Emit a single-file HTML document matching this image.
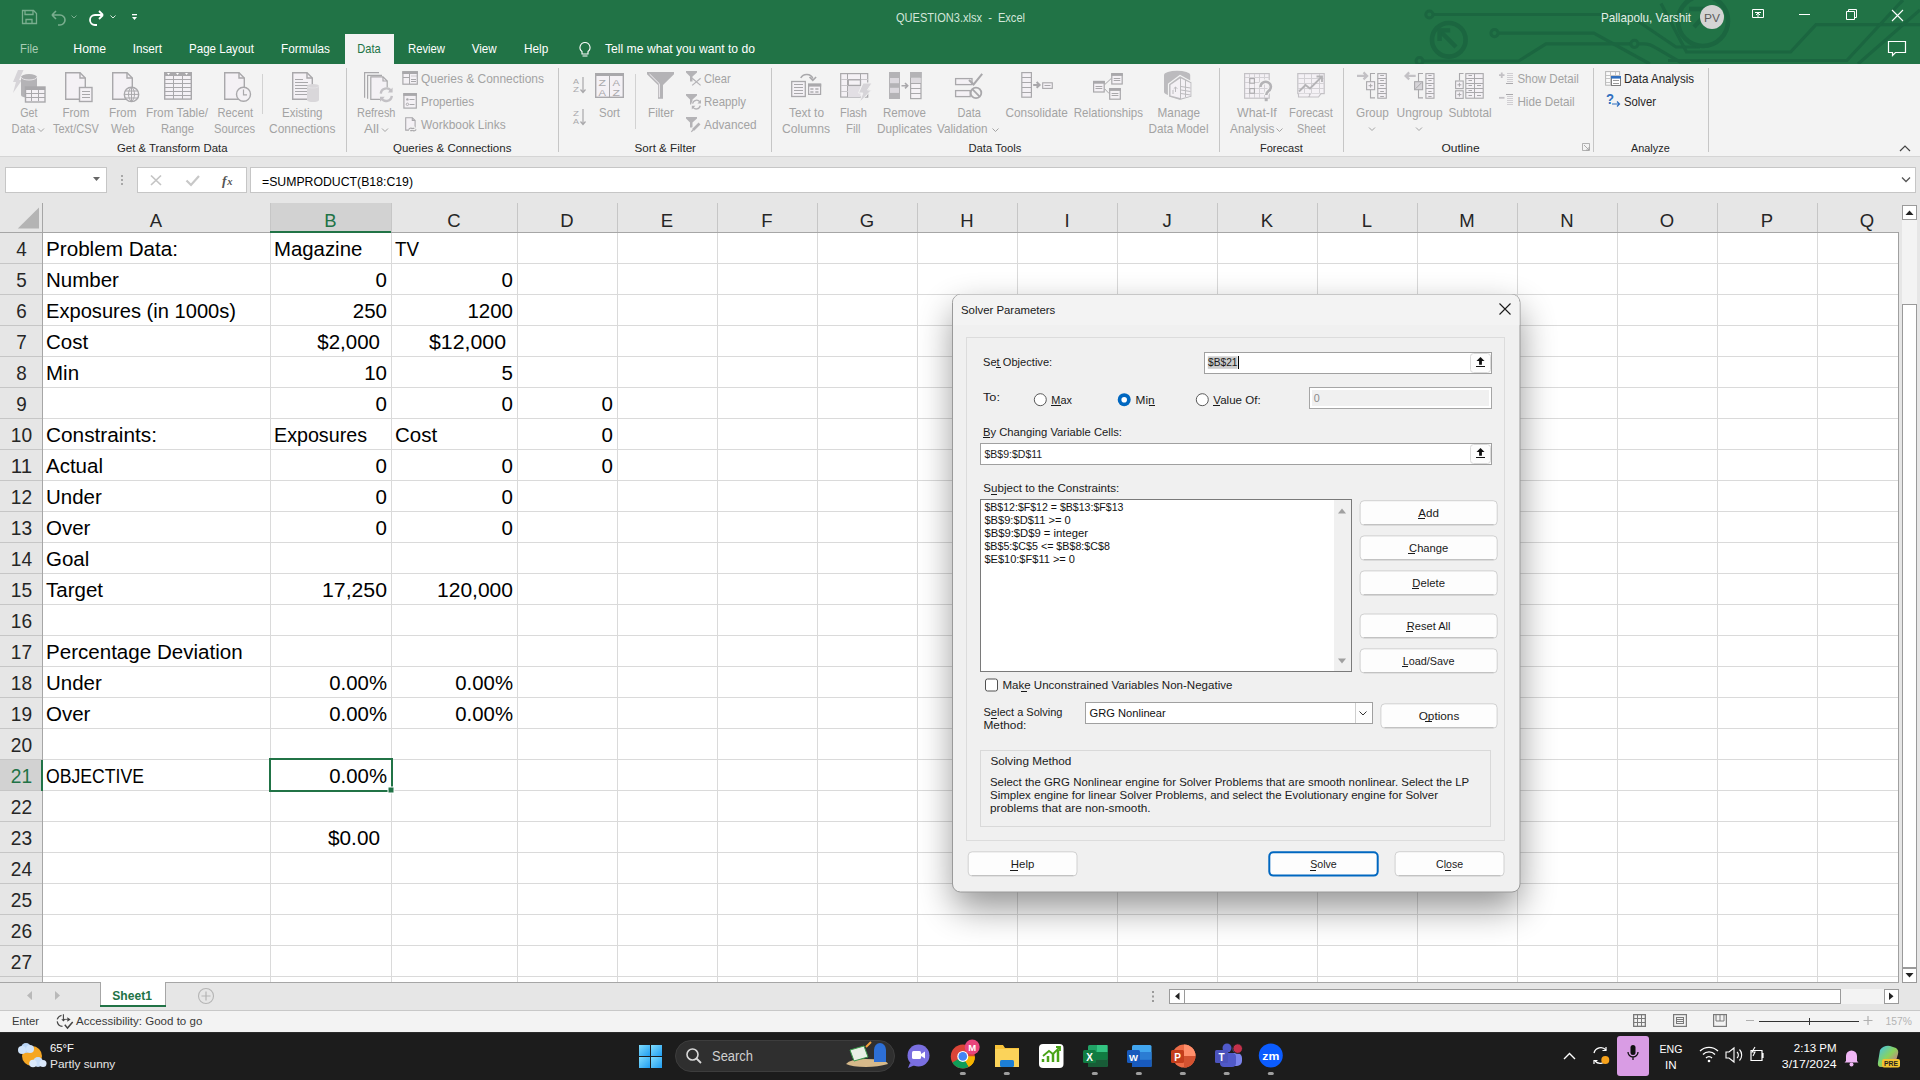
<!DOCTYPE html>
<html><head><meta charset="utf-8"><title>Excel</title>
<style>
*{margin:0;padding:0}
html,body{width:1920px;height:1080px;overflow:hidden;background:#fff}
svg{display:block;font-family:"Liberation Sans",sans-serif}
text{white-space:pre}
</style></head><body>
<svg width="1920" height="1080" viewBox="0 0 1920 1080">
<rect x="0" y="0" width="1920" height="64" fill="#217346" />
<g fill="none" stroke="#1b6640" stroke-width="3.2">
<path d="M1433 14.5 H1608 L1628 14.5 L1676 47 H1700" fill="none" />
<circle cx="1429.4" cy="14.5" r="3.6" fill="none" stroke="#1b6640" stroke-width="3" />
<circle cx="1448.8" cy="39.8" r="16.8" fill="none" stroke="#1b6640" stroke-width="4.6" />
<path d="M1456 47 L1441.5 32.5" fill="none" stroke="#1b6640" stroke-width="4.4" />
<path d="M1439.6 41 V30.4 H1450.2" fill="none" stroke="#1b6640" stroke-width="4.4" />
<path d="M1498.4 33.1 H1593.8 L1650 64" fill="none" />
<circle cx="1494.5" cy="33.1" r="3.6" fill="none" stroke="#1b6640" stroke-width="3" />
<path d="M1423 61 H1518.8 L1546 43.8 H1630.6" fill="none" />
<circle cx="1419.5" cy="61" r="3.4" fill="none" stroke="#1b6640" stroke-width="3" />
<circle cx="1634.4" cy="43.8" r="3.6" fill="none" stroke="#1b6640" stroke-width="3" />
<path d="M1638.2 43.8 H1644 Q1650 43.8 1656 48 L1680 62 H1690" fill="none" />
<circle cx="1703" cy="21" r="25" fill="none" stroke="#1b6640" stroke-width="4.6" />
<path d="M1689 9 H1711 L1694 27" fill="none" stroke="#1b6640" stroke-width="4.4" />
<path d="M1661 3.5 L1686.5 52 H1790.6 L1816 24.7 H1920" fill="none" />
<path d="M1668 60.5 H1846.8 L1900 3 L1903 0" fill="none" />
<path d="M1858 64 L1920 10" fill="none" />
</g>
<path d="M22.5 10.5 h11 l3 3 v10 h-14 z" fill="none" stroke="#7aae8f" stroke-width="1.3" />
<path d="M25 10.5 v4 h8 v-4 M26 23.5 v-4 h6 v4" fill="none" stroke="#7aae8f" stroke-width="1.3" />
<path d="M52 15 l4 -4 M52 15 l4 4 M52 15 h8 a5 5 0 0 1 0 10 h-2" fill="none" stroke="#7aae8f" stroke-width="1.6" />
<path d="M71.5 15.5 l2.5 2.5 l2.5 -2.5" fill="none" stroke="#7aae8f" stroke-width="1" />
<path d="M103 15 l-4 -4 M103 15 l-4 4 M103 15 h-8 a5 5 0 0 0 0 10 h2" fill="none" stroke="#fff" stroke-width="1.8" />
<path d="M110.5 15.5 l2.5 2.5 l2.5 -2.5" fill="none" stroke="#d8e8de" stroke-width="1" />
<rect x="132" y="14" width="5" height="1.3" fill="#fff" />
<path d="M132 17 h5 l-2.5 3 z" fill="#fff" />
<text x="896" y="22" font-size="12.6" fill="#d3e6da" textLength="129" lengthAdjust="spacingAndGlyphs" >QUESTION3.xlsx  -  Excel</text>
<text x="1601" y="22" font-size="12.6" fill="#e3efe7" textLength="90" lengthAdjust="spacingAndGlyphs" >Pallapolu, Varshit</text>
<circle cx="1712" cy="17" r="12" fill="#d4d4d4" />
<text x="1712" y="21.5" font-size="11" fill="#5b5b5b" text-anchor="middle" textLength="16" lengthAdjust="spacingAndGlyphs" >PV</text>
<path d="M1752.5 9.5 h11 v8 h-11 z" fill="none" stroke="#ffffff" stroke-width="1" />
<path d="M1755 12.5 h6 M1758 17.5 v-4 M1756 15 l2 -2 l2 2" fill="none" stroke="#ffffff" stroke-width="1" />
<rect x="1799" y="14" width="11" height="1" fill="#ffffff" />
<path d="M1846.5 11.5 h8 v8 h-8 z M1848.5 11.5 v-2 h8 v8 h-2" fill="none" stroke="#ffffff" stroke-width="1" />
<path d="M1892 10 l11 11 M1903 10 l-11 11" fill="none" stroke="#ffffff" stroke-width="1.1" />
<path d="M1888.5 41.5 h17 v11 h-10 l-3 3 v-3 h-4 z" fill="none" stroke="#ffffff" stroke-width="1.2" />
<rect x="345" y="34" width="49" height="30" fill="#f3f3f3" />
<text x="20" y="53" font-size="12.2" fill="#a8cdb4" textLength="18.3" lengthAdjust="spacingAndGlyphs" >File</text>
<text x="73.3" y="53" font-size="12.2" fill="#fff" textLength="32.7" lengthAdjust="spacingAndGlyphs" >Home</text>
<text x="132.7" y="53" font-size="12.2" fill="#fff" textLength="29.3" lengthAdjust="spacingAndGlyphs" >Insert</text>
<text x="189" y="53" font-size="12.2" fill="#fff" textLength="65" lengthAdjust="spacingAndGlyphs" >Page Layout</text>
<text x="281" y="53" font-size="12.2" fill="#fff" textLength="49" lengthAdjust="spacingAndGlyphs" >Formulas</text>
<text x="357.3" y="53" font-size="12.2" fill="#217346" textLength="23.4" lengthAdjust="spacingAndGlyphs" >Data</text>
<text x="408" y="53" font-size="12.2" fill="#fff" textLength="37" lengthAdjust="spacingAndGlyphs" >Review</text>
<text x="471.7" y="53" font-size="12.2" fill="#fff" textLength="25" lengthAdjust="spacingAndGlyphs" >View</text>
<text x="524" y="53" font-size="12.2" fill="#fff" textLength="24.3" lengthAdjust="spacingAndGlyphs" >Help</text>
<text x="605" y="53" font-size="12.2" fill="#fff" textLength="150" lengthAdjust="spacingAndGlyphs" >Tell me what you want to do</text>
<path d="M585 42.5 a5 5 0 0 1 3 9 v2.5 h-6 v-2.5 a5 5 0 0 1 3 -9 z" fill="none" stroke="#fff" stroke-width="1.1" />
<rect x="582.5" y="55.5" width="5" height="1" fill="#fff" />
<rect x="0" y="64" width="1920" height="92" fill="#f3f3f3" />
<rect x="0" y="156" width="1920" height="1" fill="#d5d5d5"/>
<rect x="0" y="157" width="1920" height="1" fill="#e1e1e1" />
<rect x="346" y="68" width="1" height="84" fill="#c6c6c6"/>
<rect x="558" y="68" width="1" height="84" fill="#c6c6c6"/>
<rect x="771" y="68" width="1" height="84" fill="#c6c6c6"/>
<rect x="1219" y="68" width="1" height="84" fill="#c6c6c6"/>
<rect x="1343" y="68" width="1" height="84" fill="#c6c6c6"/>
<rect x="1593" y="68" width="1" height="84" fill="#c6c6c6"/>
<rect x="1708" y="68" width="1" height="84" fill="#c6c6c6"/>
<rect x="262" y="74" width="1" height="40" fill="#d2d2d2"/>
<rect x="635" y="74" width="1" height="55" fill="#d2d2d2"/>
<path d="M18 70 H23.5 L19 80 H22 L13 93 L16 82 H13 Z" fill="#d6d4d8" />
<path d="M21 77 a8 3 0 0 1 16 0 V95 a8 3 0 0 1 -16 0 Z" fill="#b4b3b6" />
<path d="M21 77 a8 3 0 0 0 16 0" fill="none" stroke="#e9e7ea" stroke-width="1" />
<rect x="25.5" y="87" width="19.5" height="15" fill="#f4f1f5" stroke="#a9a8ab" stroke-width="1.4" />
<rect x="25.5" y="87" width="19.5" height="3" fill="#a9a8ab" />
<rect x="31" y="89" width="1" height="12" fill="#a9a8ab"/>
<rect x="38" y="89" width="1" height="12" fill="#a9a8ab"/>
<rect x="26" y="93" width="19" height="1" fill="#a9a8ab"/>
<rect x="26" y="97" width="19" height="1" fill="#a9a8ab"/>
<text x="20.3" y="117" font-size="12.2" fill="#a3a3a3" textLength="17.2" lengthAdjust="spacingAndGlyphs" >Get</text>
<text x="11.6" y="133" font-size="12.2" fill="#a3a3a3" textLength="23.5" lengthAdjust="spacingAndGlyphs" >Data</text>
<path d="M38 128.5 l3 3 l3 -3" fill="none" stroke="#a3a3a3" stroke-width="1" />
<path d="M65.7 72.7 H80 L85.3 78 V99.3 H65.7 Z" fill="#f4f1f5" stroke="#a9a8ab" stroke-width="1.4" />
<path d="M80 72.7 V78 H85.3" fill="none" stroke="#a9a8ab" stroke-width="1.4" />
<rect x="79.5" y="87.5" width="12.5" height="14" fill="#f4f1f5" stroke="#a9a8ab" stroke-width="1.4" />
<rect x="82" y="91" width="8" height="1" fill="#a9a8ab"/>
<rect x="82" y="94" width="8" height="1" fill="#a9a8ab"/>
<rect x="82" y="97" width="8" height="1" fill="#a9a8ab"/>
<text x="62.4" y="117" font-size="12.2" fill="#a3a3a3" textLength="27" lengthAdjust="spacingAndGlyphs" >From</text>
<text x="53" y="133" font-size="12.2" fill="#a3a3a3" textLength="45.8" lengthAdjust="spacingAndGlyphs" >Text/CSV</text>
<path d="M112.7 72.7 H127 L132.3 78 V99.3 H112.7 Z" fill="#f4f1f5" stroke="#a9a8ab" stroke-width="1.4" />
<path d="M127 72.7 V78 H132.3" fill="none" stroke="#a9a8ab" stroke-width="1.4" />
<circle cx="131.5" cy="94.4" r="7.2" fill="#f4f1f5" stroke="#a9a8ab" stroke-width="1.4" />
<path d="M124.5 94.4 H138.5 M125.5 91 H137.5 M125.5 98 H137.5 M131.5 87.2 V101.6 M131.5 87.2 c-4 3 -4 11 0 14.4 M131.5 87.2 c4 3 4 11 0 14.4" fill="none" stroke="#a9a8ab" stroke-width="1" />
<text x="109" y="117" font-size="12.2" fill="#a3a3a3" textLength="27.5" lengthAdjust="spacingAndGlyphs" >From</text>
<text x="111" y="133" font-size="12.2" fill="#a3a3a3" textLength="23.6" lengthAdjust="spacingAndGlyphs" >Web</text>
<rect x="164.7" y="72.7" width="26.6" height="26.4" fill="#f4f1f5" stroke="#a9a8ab" stroke-width="1.4" />
<rect x="164" y="72" width="28" height="4" fill="#a9a8ab" />
<rect x="173" y="76" width="1" height="23" fill="#a9a8ab"/>
<rect x="182" y="76" width="1" height="23" fill="#a9a8ab"/>
<rect x="165" y="79" width="26" height="1" fill="#a9a8ab"/>
<rect x="165" y="83" width="26" height="1" fill="#a9a8ab"/>
<rect x="165" y="87" width="26" height="1" fill="#a9a8ab"/>
<rect x="165" y="91" width="26" height="1" fill="#a9a8ab"/>
<rect x="165" y="95" width="26" height="1" fill="#a9a8ab"/>
<path d="M167.0 73 h3 l-1.5 2 z" fill="#fff" />
<path d="M176.0 73 h3 l-1.5 2 z" fill="#fff" />
<path d="M185.0 73 h3 l-1.5 2 z" fill="#fff" />
<text x="146" y="117" font-size="12.2" fill="#a3a3a3" textLength="62" lengthAdjust="spacingAndGlyphs" >From Table/</text>
<text x="161" y="133" font-size="12.2" fill="#a3a3a3" textLength="33" lengthAdjust="spacingAndGlyphs" >Range</text>
<path d="M224.7 72.7 H239 L244.3 78 V99.3 H224.7 Z" fill="#f4f1f5" stroke="#a9a8ab" stroke-width="1.4" />
<path d="M239 72.7 V78 H244.3" fill="none" stroke="#a9a8ab" stroke-width="1.4" />
<circle cx="243.5" cy="94.3" r="7" fill="#f4f1f5" stroke="#a9a8ab" stroke-width="1.4" />
<path d="M243.5 89.5 V94.8 H247" fill="none" stroke="#a9a8ab" stroke-width="1.2" />
<text x="217.5" y="117" font-size="12.2" fill="#a3a3a3" textLength="35.5" lengthAdjust="spacingAndGlyphs" >Recent</text>
<text x="214" y="133" font-size="12.2" fill="#a3a3a3" textLength="41" lengthAdjust="spacingAndGlyphs" >Sources</text>
<path d="M292.7 72.7 H307 L312.3 78 V99.3 H292.7 Z" fill="#f4f1f5" stroke="#a9a8ab" stroke-width="1.4" />
<path d="M307 72.7 V78 H312.3" fill="none" stroke="#a9a8ab" stroke-width="1.4" />
<rect x="295" y="79" width="8" height="1" fill="#a9a8ab"/>
<rect x="295" y="82" width="13" height="1" fill="#a9a8ab"/>
<rect x="295" y="85" width="13" height="1" fill="#a9a8ab"/>
<rect x="295" y="88" width="13" height="1" fill="#a9a8ab"/>
<rect x="295" y="91" width="13" height="1" fill="#a9a8ab"/>
<rect x="295" y="94" width="13" height="1" fill="#a9a8ab"/>
<path d="M307 86 a6 2 0 0 1 12 0 V100 a6 2 0 0 1 -12 0 Z" fill="#d9d7da" />
<path d="M307 86 a6 2 0 0 0 12 0" fill="none" stroke="#e6e4e7" stroke-width="0.8" />
<text x="282" y="117" font-size="12.2" fill="#a3a3a3" textLength="40.5" lengthAdjust="spacingAndGlyphs" >Existing</text>
<text x="269" y="133" font-size="12.2" fill="#a3a3a3" textLength="66.5" lengthAdjust="spacingAndGlyphs" >Connections</text>
<text x="117" y="152" font-size="11.6" fill="#262626" textLength="110.5" lengthAdjust="spacingAndGlyphs" >Get &amp; Transform Data</text>
<path d="M364.6 97.7 V72.6 H379" fill="none" stroke="#a9a8ab" stroke-width="1.2" />
<path d="M367.6 98.8 V75.3 H382" fill="none" stroke="#a9a8ab" stroke-width="1.2" />
<path d="M370.8 76.9 H383 L387.2 81 V99.4 H370.8 Z" fill="#f4f1f5" stroke="#a9a8ab" stroke-width="1.2" />
<path d="M383 76.9 V81 H387.2" fill="none" stroke="#a9a8ab" stroke-width="1.2" />
<circle cx="386.3" cy="94.7" r="7.5" fill="#f3f3f3" />
<path d="M380.8 93.6 a5.6 5.6 0 0 1 10.4 -2.4 M391.8 95.8 a5.6 5.6 0 0 1 -10.4 2.4" fill="none" stroke="#c3c1c5" stroke-width="2.4" />
<path d="M392.6 87.6 V92.6 H387.8 Z M380 101.8 V96.8 H384.8 Z" fill="#c3c1c5" />
<text x="357" y="117" font-size="12.2" fill="#a3a3a3" textLength="38.5" lengthAdjust="spacingAndGlyphs" >Refresh</text>
<text x="364" y="133" font-size="12.2" fill="#a3a3a3" textLength="15" lengthAdjust="spacingAndGlyphs" >All</text>
<path d="M382 128.5 l3 3 l3 -3" fill="none" stroke="#a3a3a3" stroke-width="1" />
<rect x="402.9" y="71.8" width="14.4" height="12.4" fill="#f4f1f5" stroke="#a9a8ab" stroke-width="1.2" />
<rect x="402.3" y="71.2" width="15.6" height="2.8" fill="#a9a8ab" />
<rect x="409" y="74" width="1" height="10" fill="#a9a8ab"/>
<rect x="403" y="77" width="7" height="1" fill="#a9a8ab"/>
<rect x="411.5" y="75.5" width="1" height="1" fill="#a9a8ab" />
<rect x="413.5" y="75.5" width="1" height="1" fill="#a9a8ab" />
<rect x="415.5" y="75.5" width="1" height="1" fill="#a9a8ab" />
<rect x="411" y="79" width="5" height="1" fill="#a9a8ab"/>
<rect x="411" y="81" width="5" height="1" fill="#a9a8ab"/>
<text x="421" y="83" font-size="12.2" fill="#a3a3a3" textLength="123" lengthAdjust="spacingAndGlyphs" >Queries &amp; Connections</text>
<rect x="403.9" y="93.7" width="12.4" height="14.4" fill="#f4f1f5" stroke="#a9a8ab" stroke-width="1.2" />
<rect x="403.3" y="93.1" width="13.6" height="2.8" fill="#a9a8ab" />
<circle cx="407.4" cy="99.4" r="1.2" fill="#a9a8ab" />
<circle cx="407.4" cy="104.3" r="1.2" fill="#f4f1f5" stroke="#a9a8ab" stroke-width="0.9" />
<rect x="409.5" y="99" width="5.0" height="1" fill="#a9a8ab"/>
<rect x="409.5" y="104" width="5.0" height="1" fill="#a9a8ab"/>
<text x="421" y="106" font-size="12.2" fill="#a3a3a3" textLength="53" lengthAdjust="spacingAndGlyphs" >Properties</text>
<path d="M405.7 117.7 H412.3 L415.1 120.5 V130.10000000000002 H405.7 Z" fill="#f4f1f5" stroke="#a9a8ab" stroke-width="1.1" />
<path d="M412.3 117.7 V120.5 H415.1" fill="none" stroke="#a9a8ab" stroke-width="1.1" />
<circle cx="412.4" cy="129.5" r="3.6" fill="#f3f3f3" />
<path d="M408.8 129.8 a2 1.6 0 0 1 3.6 -1 M416 129.2 a2 1.6 0 0 1 -3.6 1 M410.2 130.6 h2 M412.4 128.4 h2" fill="none" stroke="#a9a8ab" stroke-width="1.1" />
<text x="421" y="129" font-size="12.2" fill="#a3a3a3" textLength="84.7" lengthAdjust="spacingAndGlyphs" >Workbook Links</text>
<text x="393" y="152" font-size="11.6" fill="#262626" textLength="118.4" lengthAdjust="spacingAndGlyphs" >Queries &amp; Connections</text>
<text x="573" y="84" font-size="7.5" fill="#a9a8ab" textLength="6" lengthAdjust="spacingAndGlyphs" >A</text>
<text x="573" y="92" font-size="7.5" fill="#a9a8ab" textLength="6" lengthAdjust="spacingAndGlyphs" >Z</text>
<path d="M583 77 V92 M580.5 89.5 l2.5 3 l2.5 -3" fill="none" stroke="#a9a8ab" stroke-width="1.2" />
<text x="573" y="116" font-size="7.5" fill="#a9a8ab" textLength="6" lengthAdjust="spacingAndGlyphs" >Z</text>
<text x="573" y="124" font-size="7.5" fill="#a9a8ab" textLength="6" lengthAdjust="spacingAndGlyphs" >A</text>
<path d="M583 109 V124 M580.5 121.5 l2.5 3 l2.5 -3" fill="none" stroke="#a9a8ab" stroke-width="1.2" />
<rect x="595.7" y="73.7" width="27.6" height="23.6" fill="#f4f1f5" stroke="#a9a8ab" stroke-width="1.4" />
<rect x="595" y="73" width="29" height="3" fill="#a9a8ab" />
<rect x="609" y="76" width="1" height="21" fill="#a9a8ab"/>
<text x="598.5" y="86" font-size="9.5" fill="#a9a8ab" textLength="7.5" lengthAdjust="spacingAndGlyphs" >Z</text>
<text x="598.5" y="96" font-size="9.5" fill="#a9a8ab" textLength="7.5" lengthAdjust="spacingAndGlyphs" >A</text>
<text x="612.5" y="86" font-size="9.5" fill="#a9a8ab" textLength="7.5" lengthAdjust="spacingAndGlyphs" >A</text>
<text x="612.5" y="96" font-size="9.5" fill="#a9a8ab" textLength="7.5" lengthAdjust="spacingAndGlyphs" >Z</text>
<text x="599" y="117" font-size="12.2" fill="#a3a3a3" textLength="21" lengthAdjust="spacingAndGlyphs" >Sort</text>
<path d="M647 72 H674 V74.3 L663 85 V98.7 H658 V85 L647 74.3 Z" fill="#b4b3b6" />
<path d="M649.5 74 L659.3 83.7 V97.3" fill="none" stroke="#f4f1f5" stroke-width="1" />
<text x="648" y="117" font-size="12.2" fill="#a3a3a3" textLength="26" lengthAdjust="spacingAndGlyphs" >Filter</text>
<path d="M686 71 H697 V72.5 L692.5 76.4 V81.5 H690 V76.4 L686 72.5 Z" fill="#b4b3b6" />
<path d="M692.2 78.3 L700.6 85.4 M692.2 85.4 L700.6 78.3" fill="none" stroke="#b4b3b6" stroke-width="1.2" />
<text x="704" y="83" font-size="12.2" fill="#a3a3a3" textLength="26.7" lengthAdjust="spacingAndGlyphs" >Clear</text>
<path d="M686 94 H697 V95.5 L692.5 99.4 V104.5 H690 V99.4 L686 95.5 Z" fill="#b4b3b6" />
<circle cx="696.4" cy="104.6" r="5.2" fill="#f3f3f3" />
<path d="M692.6 103.6 a4 4 0 0 1 7.4 -1.4 M700.2 105.6 a4 4 0 0 1 -7.4 1.4" fill="none" stroke="#b4b3b6" stroke-width="1.3" />
<path d="M701 99.8 V103.4 H697.4 Z M691.8 109.4 V105.8 H695.4 Z" fill="#b4b3b6" />
<text x="704" y="106" font-size="12.2" fill="#a3a3a3" textLength="42" lengthAdjust="spacingAndGlyphs" >Reapply</text>
<path d="M686 117 H697 V118.5 L692.5 122.4 V127.5 H690 V122.4 L686 118.5 Z" fill="#b4b3b6" />
<path d="M699.5 123.5 L692.5 130.5" fill="none" stroke="#f3f3f3" stroke-width="4.5" />
<path d="M699.5 123.5 L693 130" fill="none" stroke="#b4b3b6" stroke-width="2.6" />
<path d="M693 130 L691.3 131.8" fill="none" stroke="#b4b3b6" stroke-width="1.2" />
<text x="704" y="129" font-size="12.2" fill="#a3a3a3" textLength="52.6" lengthAdjust="spacingAndGlyphs" >Advanced</text>
<text x="634.5" y="152" font-size="11.6" fill="#262626" textLength="61.5" lengthAdjust="spacingAndGlyphs" >Sort &amp; Filter</text>
<rect x="791.7" y="81.5" width="13.6" height="15" fill="#f4f1f5" stroke="#a9a8ab" stroke-width="1.3" />
<rect x="794" y="84" width="9" height="1" fill="#a9a8ab"/>
<rect x="794" y="87" width="9" height="1" fill="#a9a8ab"/>
<rect x="794" y="90" width="9" height="1" fill="#a9a8ab"/>
<rect x="794" y="93" width="9" height="1" fill="#a9a8ab"/>
<rect x="808.6" y="84.2" width="12" height="10.2" fill="#f4f1f5" stroke="#a9a8ab" stroke-width="1.2" />
<rect x="808" y="83.6" width="13.2" height="3" fill="#a9a8ab" />
<rect x="810.3" y="88.3" width="3.2" height="1.4" fill="#a9a8ab" />
<rect x="815.3" y="88.3" width="3.2" height="1.4" fill="#a9a8ab" />
<rect x="810.3" y="91.3" width="3.2" height="1.4" fill="#a9a8ab" />
<rect x="815.3" y="91.3" width="3.2" height="1.4" fill="#a9a8ab" />
<path d="M800.8 78 a6.5 6 0 0 1 12 0.5" fill="none" stroke="#a9a8ab" stroke-width="1.6" />
<path d="M809.5 77 l3.3 3.3 l3.3 -3.3" fill="none" stroke="#a9a8ab" stroke-width="1.6" />
<text x="789" y="117" font-size="12.2" fill="#a3a3a3" textLength="35" lengthAdjust="spacingAndGlyphs" >Text to</text>
<text x="782" y="133" font-size="12.2" fill="#a3a3a3" textLength="48" lengthAdjust="spacingAndGlyphs" >Columns</text>
<rect x="840.7" y="73.6" width="27" height="23.5" fill="#f4f1f5" stroke="#a9a8ab" stroke-width="1.2" />
<rect x="848" y="85.6" width="12.5" height="11.5" fill="#e2dfe4" />
<rect x="847" y="73.6" width="1" height="23.400000000000006" fill="#a9a8ab"/>
<rect x="860" y="73.6" width="1" height="6.400000000000006" fill="#a9a8ab"/>
<rect x="841" y="79" width="27" height="1" fill="#c9c7cb"/>
<rect x="841" y="85" width="7" height="1" fill="#c9c7cb"/>
<rect x="841" y="91" width="7" height="1" fill="#c9c7cb"/>
<rect x="848.3" y="79.8" width="12.2" height="5.6" fill="#f4f1f5" stroke="#a9a8ab" stroke-width="1.3" />
<path d="M863 83 H872 L867.5 90 H871.5 L859.5 102.5 L862.8 93 H858.5 Z" fill="#d6d4d8" stroke="#f3f3f3" stroke-width="1" />
<text x="840" y="117" font-size="12.2" fill="#a3a3a3" textLength="27" lengthAdjust="spacingAndGlyphs" >Flash</text>
<text x="846" y="133" font-size="12.2" fill="#a3a3a3" textLength="14.6" lengthAdjust="spacingAndGlyphs" >Fill</text>
<rect x="889" y="72" width="11" height="27" fill="#b4b3b6" />
<rect x="890" y="78" width="9" height="5.2" fill="#dcd9de" />
<rect x="890" y="87.8" width="9" height="5.1" fill="#dcd9de" />
<rect x="910.6" y="72.6" width="10.4" height="26" fill="#f4f1f5" stroke="#a9a8ab" stroke-width="1.2" />
<rect x="910" y="72" width="11.6" height="5.8" fill="#b4b3b6" />
<rect x="911" y="78" width="9.6" height="5.2" fill="#dcd9de" />
<rect x="911" y="83" width="10" height="1" fill="#a9a8ab"/>
<rect x="911" y="88" width="10" height="1" fill="#a9a8ab"/>
<rect x="911" y="93" width="10" height="1" fill="#a9a8ab"/>
<path d="M901.5 85.7 H907.5 M905 83 l2.7 2.7 l-2.7 2.7" fill="none" stroke="#a9a8ab" stroke-width="1.6" />
<text x="883" y="117" font-size="12.2" fill="#a3a3a3" textLength="43" lengthAdjust="spacingAndGlyphs" >Remove</text>
<text x="877" y="133" font-size="12.2" fill="#a3a3a3" textLength="55" lengthAdjust="spacingAndGlyphs" >Duplicates</text>
<rect x="955.6" y="78.6" width="16.4" height="6" fill="#f4f1f5" stroke="#a9a8ab" stroke-width="1.3" />
<rect x="955.6" y="90.6" width="14.6" height="6" fill="#f4f1f5" stroke="#a9a8ab" stroke-width="1.3" />
<path d="M969 80 l4.6 4.5 l8.6 -10.7" fill="none" stroke="#a9a8ab" stroke-width="2" />
<circle cx="976" cy="92.9" r="5.3" fill="#f3f3f3" stroke="#a9a8ab" stroke-width="1.8" />
<path d="M972.3 89.2 l7.4 7.4" fill="none" stroke="#a9a8ab" stroke-width="1.8" />
<text x="957.6" y="117" font-size="12.2" fill="#a3a3a3" textLength="23.2" lengthAdjust="spacingAndGlyphs" >Data</text>
<text x="937" y="133" font-size="12.2" fill="#a3a3a3" textLength="50.5" lengthAdjust="spacingAndGlyphs" >Validation</text>
<path d="M992.5 128.5 l3 3 l3 -3" fill="none" stroke="#a3a3a3" stroke-width="1" />
<rect x="1021.8" y="72.6" width="9.6" height="24.6" fill="#f4f1f5" stroke="#a9a8ab" stroke-width="1.2" />
<rect x="1022" y="77" width="9" height="1" fill="#a9a8ab"/>
<rect x="1022" y="82" width="9" height="1" fill="#a9a8ab"/>
<rect x="1022" y="87" width="9" height="1" fill="#a9a8ab"/>
<rect x="1022" y="92" width="9" height="1" fill="#a9a8ab"/>
<path d="M1033.2 84.9 H1039 M1036.6 82 l3 2.9 l-3 2.9" fill="none" stroke="#a9a8ab" stroke-width="2" />
<rect x="1042.7" y="82.8" width="9.6" height="5.6" fill="#f4f1f5" stroke="#a9a8ab" stroke-width="1.1" />
<rect x="1044.5" y="85" width="6.0" height="1" fill="#a9a8ab"/>
<text x="1005.5" y="117" font-size="12.2" fill="#a3a3a3" textLength="62.3" lengthAdjust="spacingAndGlyphs" >Consolidate</text>
<rect x="1093.6" y="81.5" width="10.599999999999955" height="10.49999999999999" fill="#f4f1f5" stroke="#a9a8ab" stroke-width="1.2" />
<rect x="1093" y="80.9" width="11.799999999999955" height="2.8" fill="#a9a8ab" />
<rect x="1095.5" y="86" width="6.7999999999999545" height="1" fill="#a9a8ab"/>
<rect x="1095.5" y="88" width="6.7999999999999545" height="1" fill="#a9a8ab"/>
<rect x="1111.8" y="73.69999999999999" width="10.39999999999991" height="10.3" fill="#f4f1f5" stroke="#a9a8ab" stroke-width="1.2" />
<rect x="1111.2" y="73.1" width="11.599999999999909" height="2.8" fill="#a9a8ab" />
<rect x="1113.7" y="78" width="6.599999999999909" height="1" fill="#a9a8ab"/>
<rect x="1113.7" y="80" width="6.599999999999909" height="1" fill="#a9a8ab"/>
<rect x="1109.6999999999998" y="88.69999999999999" width="10.600000000000183" height="10.500000000000004" fill="#f4f1f5" stroke="#a9a8ab" stroke-width="1.2" />
<rect x="1109.1" y="88.1" width="11.800000000000182" height="2.8" fill="#a9a8ab" />
<rect x="1111.6" y="93" width="6.800000000000182" height="1" fill="#a9a8ab"/>
<rect x="1111.6" y="95" width="6.800000000000182" height="1" fill="#a9a8ab"/>
<path d="M1104.8 84.5 L1111.2 78.5 M1104.8 89 L1109.1 93.5" fill="none" stroke="#a9a8ab" stroke-width="1" />
<text x="1073.8" y="117" font-size="12.2" fill="#a3a3a3" textLength="69.2" lengthAdjust="spacingAndGlyphs" >Relationships</text>
<path d="M1164 75 a13 4.2 0 0 1 26.2 0 V92 a13 4.2 0 0 1 -26.2 0 Z" fill="#bcbbbe" />
<path d="M1168.5 84 L1180 75.5 L1192 82 V97 L1180 100.5 L1168.5 97 Z" fill="#bcbbbe" stroke="#f3f3f3" stroke-width="1.2" />
<path d="M1170.5 85 L1180 78.5 V98 L1170.5 95.5 Z" fill="#f4f1f5" />
<path d="M1181 78.5 L1190.5 83 V96 L1181 98.5 Z" fill="#f4f1f5" />
<path d="M1181 86.5 L1190.5 88.0" fill="none" stroke="#bcbbbe" stroke-width="1" />
<path d="M1181 90 L1190.5 91.5" fill="none" stroke="#bcbbbe" stroke-width="1" />
<path d="M1181 93.5 L1190.5 95.0" fill="none" stroke="#bcbbbe" stroke-width="1" />
<rect x="1185" y="80" width="1" height="17" fill="#bcbbbe"/>
<path d="M1175.5 92 v-5 l-1.8 1.8 M1175.5 87 l1.8 1.8 M1173 90 l0 4" fill="none" stroke="#bcbbbe" stroke-width="1" />
<text x="1157.6" y="117" font-size="12.2" fill="#a3a3a3" textLength="42.4" lengthAdjust="spacingAndGlyphs" >Manage</text>
<text x="1148.5" y="133" font-size="12.2" fill="#a3a3a3" textLength="60" lengthAdjust="spacingAndGlyphs" >Data Model</text>
<text x="968.4" y="152" font-size="11.6" fill="#262626" textLength="53" lengthAdjust="spacingAndGlyphs" >Data Tools</text>
<rect x="1244.6" y="73.6" width="24.6" height="24.6" fill="#f4f1f5" stroke="#c3c1c5" stroke-width="1.2" />
<rect x="1249" y="74" width="1" height="24" fill="#d3d1d5"/>
<rect x="1254" y="74" width="1" height="24" fill="#d3d1d5"/>
<rect x="1259" y="74" width="1" height="24" fill="#d3d1d5"/>
<rect x="1264" y="74" width="1" height="24" fill="#d3d1d5"/>
<rect x="1245" y="77" width="24" height="1" fill="#d3d1d5"/>
<rect x="1245" y="82" width="24" height="1" fill="#d3d1d5"/>
<rect x="1245" y="88" width="24" height="1" fill="#d3d1d5"/>
<rect x="1245" y="93" width="24" height="1" fill="#d3d1d5"/>
<rect x="1249.8" y="78.6" width="4.6" height="4.6" fill="#f4f1f5" stroke="#a9a8ab" stroke-width="1.1" />
<rect x="1249.8" y="88.6" width="4.6" height="4.6" fill="#f4f1f5" stroke="#a9a8ab" stroke-width="1.1" />
<path d="M1260.5 87 a5.2 5 0 1 1 8 4 c-1.6 1.2 -2.3 2 -2.3 4" fill="none" stroke="#f3f3f3" stroke-width="5" />
<path d="M1260.5 87 a5.2 5 0 1 1 8 4 c-1.6 1.2 -2.3 2 -2.3 4" fill="none" stroke="#b4b3b6" stroke-width="2.6" />
<rect x="1264.7" y="98" width="3" height="3.2" fill="#b4b3b6" />
<text x="1237" y="117" font-size="12.2" fill="#a3a3a3" textLength="39.8" lengthAdjust="spacingAndGlyphs" >What-If</text>
<text x="1230" y="133" font-size="12.2" fill="#a3a3a3" textLength="44.5" lengthAdjust="spacingAndGlyphs" >Analysis</text>
<path d="M1276.5 128.5 l3 3 l3 -3" fill="none" stroke="#a3a3a3" stroke-width="1" />
<rect x="1297.8" y="73.6" width="26.4" height="20" fill="#f4f1f5" stroke="#c3c1c5" stroke-width="1.2" />
<rect x="1304" y="74" width="1" height="19.5" fill="#d3d1d5"/>
<rect x="1311" y="74" width="1" height="19.5" fill="#d3d1d5"/>
<rect x="1319" y="74" width="1" height="19.5" fill="#d3d1d5"/>
<rect x="1298" y="78" width="26" height="1" fill="#d3d1d5"/>
<rect x="1298" y="83" width="26" height="1" fill="#d3d1d5"/>
<rect x="1298" y="88" width="26" height="1" fill="#d3d1d5"/>
<path d="M1298.5 93.6 v3.4 h10 l2 -3.4 M1309.5 93.6 v3.4 h9 l2.5 -3.4" fill="#f4f1f5" stroke="#c3c1c5" stroke-width="1.1" />
<path d="M1299 91.5 L1305.5 85 L1310 88.5 L1321.5 77" fill="none" stroke="#b4b3b6" stroke-width="1.8" />
<path d="M1316.5 76.5 H1322 V82" fill="none" stroke="#b4b3b6" stroke-width="1.8" />
<text x="1289" y="117" font-size="12.2" fill="#a3a3a3" textLength="43.8" lengthAdjust="spacingAndGlyphs" >Forecast</text>
<text x="1297" y="133" font-size="12.2" fill="#a3a3a3" textLength="28.5" lengthAdjust="spacingAndGlyphs" >Sheet</text>
<text x="1260" y="152" font-size="11.6" fill="#262626" textLength="42.8" lengthAdjust="spacingAndGlyphs" >Forecast</text>
<path d="M1357 75.9 H1367 M1363.5 72.4 l3.6 3.5 l-3.6 3.5" fill="none" stroke="#c3c1c5" stroke-width="2.2" />
<path d="M1375 73.5 H1370.5 V97.9 H1375" fill="none" stroke="#a9a8ab" stroke-width="1.1" />
<rect x="1377.8" y="73.6" width="8.500000000000046" height="24.599999999999998" fill="#f4f1f5" stroke="#a9a8ab" stroke-width="1.1" />
<rect x="1377.7" y="78" width="8.700000000000045" height="1" fill="#a9a8ab"/>
<rect x="1377.7" y="83" width="8.700000000000045" height="1" fill="#a9a8ab"/>
<rect x="1377.7" y="88" width="8.700000000000045" height="1" fill="#a9a8ab"/>
<rect x="1377.7" y="93" width="8.700000000000045" height="1" fill="#a9a8ab"/>
<rect x="1380.2" y="75" width="3.7000000000000455" height="1" fill="#a9a8ab"/>
<rect x="1380.2" y="80" width="3.7000000000000455" height="1" fill="#a9a8ab"/>
<rect x="1380.2" y="85" width="3.7000000000000455" height="1" fill="#a9a8ab"/>
<rect x="1380.2" y="91" width="3.7000000000000455" height="1" fill="#a9a8ab"/>
<rect x="1380.2" y="96" width="3.7000000000000455" height="1" fill="#a9a8ab"/>
<rect x="1366.6" y="81.7" width="8" height="8" fill="#f4f1f5" stroke="#a9a8ab" stroke-width="1.1" />
<path d="M1368.6 85.7 h4 M1370.6 83.7 v4" fill="none" stroke="#a9a8ab" stroke-width="1" />
<text x="1356" y="117" font-size="12.2" fill="#a3a3a3" textLength="32.75" lengthAdjust="spacingAndGlyphs" >Group</text>
<path d="M1369 127.5 l3 3 l3 -3" fill="none" stroke="#a3a3a3" stroke-width="1" />
<path d="M1415.7 75.9 H1405.7 M1409.2 72.4 l-3.6 3.5 l3.6 3.5" fill="none" stroke="#c3c1c5" stroke-width="2.2" />
<path d="M1423 73.5 H1418.5 V97.9 H1423" fill="none" stroke="#a9a8ab" stroke-width="1.1" />
<rect x="1425.8999999999999" y="73.6" width="8.099999999999955" height="24.599999999999998" fill="#f4f1f5" stroke="#a9a8ab" stroke-width="1.1" />
<rect x="1425.8" y="78" width="8.299999999999955" height="1" fill="#a9a8ab"/>
<rect x="1425.8" y="83" width="8.299999999999955" height="1" fill="#a9a8ab"/>
<rect x="1425.8" y="88" width="8.299999999999955" height="1" fill="#a9a8ab"/>
<rect x="1425.8" y="93" width="8.299999999999955" height="1" fill="#a9a8ab"/>
<rect x="1428.3" y="75" width="3.2999999999999545" height="1" fill="#a9a8ab"/>
<rect x="1428.3" y="80" width="3.2999999999999545" height="1" fill="#a9a8ab"/>
<rect x="1428.3" y="85" width="3.2999999999999545" height="1" fill="#a9a8ab"/>
<rect x="1428.3" y="91" width="3.2999999999999545" height="1" fill="#a9a8ab"/>
<rect x="1428.3" y="96" width="3.2999999999999545" height="1" fill="#a9a8ab"/>
<rect x="1414.6" y="81.7" width="8" height="8" fill="#d6d4d8" stroke="#a9a8ab" stroke-width="1.1" />
<path d="M1415.5 88.8 l6.2 -6.2" fill="none" stroke="#a9a8ab" stroke-width="1" />
<text x="1396.6" y="117" font-size="12.2" fill="#a3a3a3" textLength="46" lengthAdjust="spacingAndGlyphs" >Ungroup</text>
<path d="M1416 127.5 l3 3 l3 -3" fill="none" stroke="#a3a3a3" stroke-width="1" />
<path d="M1463.5 73.5 H1459.5 V80.6" fill="none" stroke="#a9a8ab" stroke-width="1.1" />
<rect x="1455.6" y="81" width="7.6" height="7.6" fill="#f4f1f5" stroke="#a9a8ab" stroke-width="1.1" />
<path d="M1457.4 84.8 h4 M1459.4 82.8 v4" fill="none" stroke="#a9a8ab" stroke-width="1" />
<rect x="1455.6" y="90.8" width="7.6" height="7.6" fill="#f4f1f5" stroke="#a9a8ab" stroke-width="1.1" />
<path d="M1457.4 94.6 h4 M1459.4 92.6 v4" fill="none" stroke="#a9a8ab" stroke-width="1" />
<rect x="1465.8" y="73.6" width="17.4" height="24.6" fill="#f4f1f5" stroke="#a9a8ab" stroke-width="1.1" />
<rect x="1474" y="74" width="1" height="24" fill="#a9a8ab"/>
<rect x="1466" y="78" width="17" height="1" fill="#a9a8ab"/>
<rect x="1466" y="83" width="17" height="1" fill="#a9a8ab"/>
<rect x="1466" y="88" width="17" height="1" fill="#a9a8ab"/>
<rect x="1466" y="92" width="17" height="1" fill="#a9a8ab"/>
<rect x="1468.5" y="75" width="3.5" height="1" fill="#a9a8ab"/>
<rect x="1468.5" y="80" width="3.5" height="1" fill="#a9a8ab"/>
<rect x="1468.5" y="85" width="3.5" height="1" fill="#a9a8ab"/>
<rect x="1468.5" y="90" width="3.5" height="1" fill="#a9a8ab"/>
<rect x="1468.5" y="95" width="3.5" height="1" fill="#a9a8ab"/>
<rect x="1477" y="85" width="4" height="1" fill="#a9a8ab"/>
<rect x="1477" y="95" width="4" height="1" fill="#a9a8ab"/>
<text x="1448.4" y="117" font-size="12.2" fill="#a3a3a3" textLength="43.2" lengthAdjust="spacingAndGlyphs" >Subtotal</text>
<path d="M1499 75.2 h5.5 M1501.75 72.5 v5.5" fill="none" stroke="#c3c1c5" stroke-width="1.8" />
<rect x="1507" y="73" width="6" height="1" fill="#d0ced2"/>
<rect x="1507" y="75" width="6" height="1" fill="#d0ced2"/>
<rect x="1507" y="77" width="6" height="1" fill="#d0ced2"/>
<rect x="1507" y="79" width="6" height="1" fill="#d0ced2"/>
<rect x="1507" y="81" width="6" height="1" fill="#d0ced2"/>
<rect x="1506" y="83" width="7" height="1" fill="#a9a8ab"/>
<text x="1517.4" y="83" font-size="12.2" fill="#a3a3a3" textLength="61.4" lengthAdjust="spacingAndGlyphs" >Show Detail</text>
<path d="M1499 97.8 h5.5" fill="none" stroke="#c3c1c5" stroke-width="1.8" />
<rect x="1506" y="94" width="7" height="1" fill="#a9a8ab"/>
<rect x="1507" y="96" width="6" height="1" fill="#d0ced2"/>
<rect x="1507" y="98" width="6" height="1" fill="#d0ced2"/>
<rect x="1507" y="100" width="6" height="1" fill="#d0ced2"/>
<rect x="1507" y="102" width="6" height="1" fill="#d0ced2"/>
<rect x="1507" y="104" width="6" height="1" fill="#d0ced2"/>
<text x="1517.4" y="105.8" font-size="12.2" fill="#a3a3a3" textLength="57.3" lengthAdjust="spacingAndGlyphs" >Hide Detail</text>
<text x="1441.4" y="152" font-size="11.6" fill="#262626" textLength="38.2" lengthAdjust="spacingAndGlyphs" >Outline</text>
<path d="M1582.5 143.5 h7 v7 h-7 z" fill="none" stroke="#a0a0a0" stroke-width="0.8" />
<path d="M1584 145 l5 5 M1589 147 v3 h-3" fill="none" stroke="#a0a0a0" stroke-width="0.9" />
<rect x="1605.6" y="71.6" width="14" height="13.6" fill="#fafafa" stroke="#b5b5b5" stroke-width="1" />
<rect x="1610" y="72" width="1" height="13" fill="#c5c5c5"/>
<rect x="1615" y="72" width="1" height="13" fill="#c5c5c5"/>
<rect x="1606" y="75" width="14" height="1" fill="#c5c5c5"/>
<rect x="1606" y="78" width="14" height="1" fill="#c5c5c5"/>
<rect x="1606" y="82" width="14" height="1" fill="#c5c5c5"/>
<rect x="1611.5" y="76.5" width="9" height="9" fill="#fff" stroke="#7d7d7d" stroke-width="1" />
<rect x="1611" y="76" width="10" height="2.6" fill="#2f6fc0" />
<rect x="1613" y="80" width="6" height="1" fill="#9a9a9a"/>
<rect x="1613" y="83" width="6" height="1" fill="#9a9a9a"/>
<text x="1624" y="83" font-size="12.2" fill="#262626" textLength="70" lengthAdjust="spacingAndGlyphs" >Data Analysis</text>
<text x="1606" y="104" font-size="14" fill="#2f6fc0" font-weight="700" textLength="8" lengthAdjust="spacingAndGlyphs" >?</text>
<path d="M1612 104 h7 M1617 101.5 l2.5 2.5 l-2.5 2.5" fill="none" stroke="#2f6fc0" stroke-width="1.2" />
<text x="1624" y="105.8" font-size="12.2" fill="#262626" textLength="32" lengthAdjust="spacingAndGlyphs" >Solver</text>
<text x="1631" y="152" font-size="11.6" fill="#262626" textLength="38.7" lengthAdjust="spacingAndGlyphs" >Analyze</text>
<path d="M1900 151 l5 -5 l5 5" fill="none" stroke="#444" stroke-width="1.2" />
<rect x="0" y="157" width="1920" height="46" fill="#e6e6e6" />
<rect x="5.5" y="167.5" width="101" height="25" fill="#fff" stroke="#c6c6c6" stroke-width="1" rx="0"/>
<path d="M93 177 h7 l-3.5 4 z" fill="#666" />
<rect x="121" y="175" width="2" height="2" fill="#a8a8a8" />
<rect x="121" y="179" width="2" height="2" fill="#a8a8a8" />
<rect x="121" y="183" width="2" height="2" fill="#a8a8a8" />
<rect x="137.5" y="167.5" width="109" height="25" fill="#fff" stroke="#c6c6c6" stroke-width="1" rx="0"/>
<path d="M151 175.5 l10 9.5 M161 175.5 l-10 9.5" fill="none" stroke="#c4c4c4" stroke-width="1.7" />
<path d="M186.5 180.5 l4.5 4.5 l8 -9" fill="none" stroke="#c8c8c8" stroke-width="2.2" />
<text x="222" y="185" font-size="13.5" fill="#555" font-weight="700" font-family="Liberation Serif" font-style="italic">f</text>
<text x="227.3" y="185" font-size="10.5" fill="#555" font-weight="700" font-family="Liberation Serif" font-style="italic">x</text>
<rect x="250.5" y="167.5" width="1665" height="25" fill="#fff" stroke="#c6c6c6" stroke-width="1" rx="0"/>
<text x="262" y="185.5" font-size="13.7" fill="#000" textLength="151" lengthAdjust="spacingAndGlyphs" >=SUMPRODUCT(B18:C19)</text>
<path d="M1902 177.5 l4 4 l4 -4" fill="none" stroke="#555" stroke-width="1.3" />
<rect x="0" y="203" width="1899" height="30" fill="#e6e6e6" />
<rect x="270" y="203" width="121" height="29" fill="#d2d2d2" />
<path d="M17.8 228.5 L39 228.5 L39 207.5 Z" fill="#b4b4b4" />
<rect x="270" y="203" width="1" height="29" fill="#c6c6c6"/>
<text x="156.0" y="226.5" font-size="18.5" fill="#262626" text-anchor="middle" >A</text>
<rect x="391" y="203" width="1" height="29" fill="#c6c6c6"/>
<text x="330.5" y="226.5" font-size="18.5" fill="#217346" text-anchor="middle" >B</text>
<rect x="517" y="203" width="1" height="29" fill="#c6c6c6"/>
<text x="454.0" y="226.5" font-size="18.5" fill="#262626" text-anchor="middle" >C</text>
<rect x="617" y="203" width="1" height="29" fill="#c6c6c6"/>
<text x="567.0" y="226.5" font-size="18.5" fill="#262626" text-anchor="middle" >D</text>
<rect x="717" y="203" width="1" height="29" fill="#c6c6c6"/>
<text x="667.0" y="226.5" font-size="18.5" fill="#262626" text-anchor="middle" >E</text>
<rect x="817" y="203" width="1" height="29" fill="#c6c6c6"/>
<text x="767.0" y="226.5" font-size="18.5" fill="#262626" text-anchor="middle" >F</text>
<rect x="917" y="203" width="1" height="29" fill="#c6c6c6"/>
<text x="867.0" y="226.5" font-size="18.5" fill="#262626" text-anchor="middle" >G</text>
<rect x="1017" y="203" width="1" height="29" fill="#c6c6c6"/>
<text x="967.0" y="226.5" font-size="18.5" fill="#262626" text-anchor="middle" >H</text>
<rect x="1117" y="203" width="1" height="29" fill="#c6c6c6"/>
<text x="1067.0" y="226.5" font-size="18.5" fill="#262626" text-anchor="middle" >I</text>
<rect x="1217" y="203" width="1" height="29" fill="#c6c6c6"/>
<text x="1167.0" y="226.5" font-size="18.5" fill="#262626" text-anchor="middle" >J</text>
<rect x="1317" y="203" width="1" height="29" fill="#c6c6c6"/>
<text x="1267.0" y="226.5" font-size="18.5" fill="#262626" text-anchor="middle" >K</text>
<rect x="1417" y="203" width="1" height="29" fill="#c6c6c6"/>
<text x="1367.0" y="226.5" font-size="18.5" fill="#262626" text-anchor="middle" >L</text>
<rect x="1517" y="203" width="1" height="29" fill="#c6c6c6"/>
<text x="1467.0" y="226.5" font-size="18.5" fill="#262626" text-anchor="middle" >M</text>
<rect x="1617" y="203" width="1" height="29" fill="#c6c6c6"/>
<text x="1567.0" y="226.5" font-size="18.5" fill="#262626" text-anchor="middle" >N</text>
<rect x="1717" y="203" width="1" height="29" fill="#c6c6c6"/>
<text x="1667.0" y="226.5" font-size="18.5" fill="#262626" text-anchor="middle" >O</text>
<rect x="1817" y="203" width="1" height="29" fill="#c6c6c6"/>
<text x="1767.0" y="226.5" font-size="18.5" fill="#262626" text-anchor="middle" >P</text>
<text x="1867.0" y="226.5" font-size="18.5" fill="#262626" text-anchor="middle" >Q</text>
<rect x="0" y="232" width="1899" height="1" fill="#a6a6a6"/>
<rect x="270" y="231" width="121" height="2" fill="#217346" />
<rect x="42" y="203" width="1" height="780" fill="#a6a6a6"/>
<rect x="0" y="233" width="42" height="750" fill="#e6e6e6" />
<rect x="43" y="233" width="1856" height="750" fill="#fff" />
<rect x="0" y="263" width="42" height="1" fill="#c6c6c6"/>
<rect x="43" y="263" width="1856" height="1" fill="#dadada"/>
<rect x="0" y="294" width="42" height="1" fill="#c6c6c6"/>
<rect x="43" y="294" width="1856" height="1" fill="#dadada"/>
<rect x="0" y="325" width="42" height="1" fill="#c6c6c6"/>
<rect x="43" y="325" width="1856" height="1" fill="#dadada"/>
<rect x="0" y="356" width="42" height="1" fill="#c6c6c6"/>
<rect x="43" y="356" width="1856" height="1" fill="#dadada"/>
<rect x="0" y="387" width="42" height="1" fill="#c6c6c6"/>
<rect x="43" y="387" width="1856" height="1" fill="#dadada"/>
<rect x="0" y="418" width="42" height="1" fill="#c6c6c6"/>
<rect x="43" y="418" width="1856" height="1" fill="#dadada"/>
<rect x="0" y="449" width="42" height="1" fill="#c6c6c6"/>
<rect x="43" y="449" width="1856" height="1" fill="#dadada"/>
<rect x="0" y="480" width="42" height="1" fill="#c6c6c6"/>
<rect x="43" y="480" width="1856" height="1" fill="#dadada"/>
<rect x="0" y="511" width="42" height="1" fill="#c6c6c6"/>
<rect x="43" y="511" width="1856" height="1" fill="#dadada"/>
<rect x="0" y="542" width="42" height="1" fill="#c6c6c6"/>
<rect x="43" y="542" width="1856" height="1" fill="#dadada"/>
<rect x="0" y="573" width="42" height="1" fill="#c6c6c6"/>
<rect x="43" y="573" width="1856" height="1" fill="#dadada"/>
<rect x="0" y="604" width="42" height="1" fill="#c6c6c6"/>
<rect x="43" y="604" width="1856" height="1" fill="#dadada"/>
<rect x="0" y="635" width="42" height="1" fill="#c6c6c6"/>
<rect x="43" y="635" width="1856" height="1" fill="#dadada"/>
<rect x="0" y="666" width="42" height="1" fill="#c6c6c6"/>
<rect x="43" y="666" width="1856" height="1" fill="#dadada"/>
<rect x="0" y="697" width="42" height="1" fill="#c6c6c6"/>
<rect x="43" y="697" width="1856" height="1" fill="#dadada"/>
<rect x="0" y="728" width="42" height="1" fill="#c6c6c6"/>
<rect x="43" y="728" width="1856" height="1" fill="#dadada"/>
<rect x="0" y="759" width="42" height="1" fill="#c6c6c6"/>
<rect x="43" y="759" width="1856" height="1" fill="#dadada"/>
<rect x="0" y="790" width="42" height="1" fill="#c6c6c6"/>
<rect x="43" y="790" width="1856" height="1" fill="#dadada"/>
<rect x="0" y="821" width="42" height="1" fill="#c6c6c6"/>
<rect x="43" y="821" width="1856" height="1" fill="#dadada"/>
<rect x="0" y="852" width="42" height="1" fill="#c6c6c6"/>
<rect x="43" y="852" width="1856" height="1" fill="#dadada"/>
<rect x="0" y="883" width="42" height="1" fill="#c6c6c6"/>
<rect x="43" y="883" width="1856" height="1" fill="#dadada"/>
<rect x="0" y="914" width="42" height="1" fill="#c6c6c6"/>
<rect x="43" y="914" width="1856" height="1" fill="#dadada"/>
<rect x="0" y="945" width="42" height="1" fill="#c6c6c6"/>
<rect x="43" y="945" width="1856" height="1" fill="#dadada"/>
<rect x="0" y="976" width="42" height="1" fill="#c6c6c6"/>
<rect x="43" y="976" width="1856" height="1" fill="#dadada"/>
<rect x="270" y="233" width="1" height="750" fill="#dadada"/>
<rect x="391" y="233" width="1" height="750" fill="#dadada"/>
<rect x="517" y="233" width="1" height="750" fill="#dadada"/>
<rect x="617" y="233" width="1" height="750" fill="#dadada"/>
<rect x="717" y="233" width="1" height="750" fill="#dadada"/>
<rect x="817" y="233" width="1" height="750" fill="#dadada"/>
<rect x="917" y="233" width="1" height="750" fill="#dadada"/>
<rect x="1017" y="233" width="1" height="750" fill="#dadada"/>
<rect x="1117" y="233" width="1" height="750" fill="#dadada"/>
<rect x="1217" y="233" width="1" height="750" fill="#dadada"/>
<rect x="1317" y="233" width="1" height="750" fill="#dadada"/>
<rect x="1417" y="233" width="1" height="750" fill="#dadada"/>
<rect x="1517" y="233" width="1" height="750" fill="#dadada"/>
<rect x="1617" y="233" width="1" height="750" fill="#dadada"/>
<rect x="1717" y="233" width="1" height="750" fill="#dadada"/>
<rect x="1817" y="233" width="1" height="750" fill="#dadada"/>
<rect x="1898" y="232" width="1" height="751" fill="#a0a0a0"/>
<rect x="0" y="760" width="42" height="30" fill="#d2d2d2" />
<rect x="41" y="760" width="2" height="31" fill="#217346" />
<text x="21.5" y="256" font-size="19.8" fill="#262626" text-anchor="middle" textLength="10.5" lengthAdjust="spacingAndGlyphs" >4</text>
<text x="21.5" y="287" font-size="19.8" fill="#262626" text-anchor="middle" textLength="10.5" lengthAdjust="spacingAndGlyphs" >5</text>
<text x="21.5" y="318" font-size="19.8" fill="#262626" text-anchor="middle" textLength="10.5" lengthAdjust="spacingAndGlyphs" >6</text>
<text x="21.5" y="349" font-size="19.8" fill="#262626" text-anchor="middle" textLength="10.5" lengthAdjust="spacingAndGlyphs" >7</text>
<text x="21.5" y="380" font-size="19.8" fill="#262626" text-anchor="middle" textLength="10.5" lengthAdjust="spacingAndGlyphs" >8</text>
<text x="21.5" y="411" font-size="19.8" fill="#262626" text-anchor="middle" textLength="10.5" lengthAdjust="spacingAndGlyphs" >9</text>
<text x="21.5" y="442" font-size="19.8" fill="#262626" text-anchor="middle" textLength="21.3" lengthAdjust="spacingAndGlyphs" >10</text>
<text x="21.5" y="473" font-size="19.8" fill="#262626" text-anchor="middle" textLength="21.3" lengthAdjust="spacingAndGlyphs" >11</text>
<text x="21.5" y="504" font-size="19.8" fill="#262626" text-anchor="middle" textLength="21.3" lengthAdjust="spacingAndGlyphs" >12</text>
<text x="21.5" y="535" font-size="19.8" fill="#262626" text-anchor="middle" textLength="21.3" lengthAdjust="spacingAndGlyphs" >13</text>
<text x="21.5" y="566" font-size="19.8" fill="#262626" text-anchor="middle" textLength="21.3" lengthAdjust="spacingAndGlyphs" >14</text>
<text x="21.5" y="597" font-size="19.8" fill="#262626" text-anchor="middle" textLength="21.3" lengthAdjust="spacingAndGlyphs" >15</text>
<text x="21.5" y="628" font-size="19.8" fill="#262626" text-anchor="middle" textLength="21.3" lengthAdjust="spacingAndGlyphs" >16</text>
<text x="21.5" y="659" font-size="19.8" fill="#262626" text-anchor="middle" textLength="21.3" lengthAdjust="spacingAndGlyphs" >17</text>
<text x="21.5" y="690" font-size="19.8" fill="#262626" text-anchor="middle" textLength="21.3" lengthAdjust="spacingAndGlyphs" >18</text>
<text x="21.5" y="721" font-size="19.8" fill="#262626" text-anchor="middle" textLength="21.3" lengthAdjust="spacingAndGlyphs" >19</text>
<text x="21.5" y="752" font-size="19.8" fill="#262626" text-anchor="middle" textLength="21.3" lengthAdjust="spacingAndGlyphs" >20</text>
<text x="21.5" y="783" font-size="19.8" fill="#217346" text-anchor="middle" textLength="21.3" lengthAdjust="spacingAndGlyphs" >21</text>
<text x="21.5" y="814" font-size="19.8" fill="#262626" text-anchor="middle" textLength="21.3" lengthAdjust="spacingAndGlyphs" >22</text>
<text x="21.5" y="845" font-size="19.8" fill="#262626" text-anchor="middle" textLength="21.3" lengthAdjust="spacingAndGlyphs" >23</text>
<text x="21.5" y="876" font-size="19.8" fill="#262626" text-anchor="middle" textLength="21.3" lengthAdjust="spacingAndGlyphs" >24</text>
<text x="21.5" y="907" font-size="19.8" fill="#262626" text-anchor="middle" textLength="21.3" lengthAdjust="spacingAndGlyphs" >25</text>
<text x="21.5" y="938" font-size="19.8" fill="#262626" text-anchor="middle" textLength="21.3" lengthAdjust="spacingAndGlyphs" >26</text>
<text x="21.5" y="969" font-size="19.8" fill="#262626" text-anchor="middle" textLength="21.3" lengthAdjust="spacingAndGlyphs" >27</text>
<text x="46" y="256" font-size="20.5" fill="#000" textLength="132" lengthAdjust="spacingAndGlyphs" >Problem Data:</text>
<text x="274" y="256" font-size="20.5" fill="#000" textLength="88.3" lengthAdjust="spacingAndGlyphs" >Magazine</text>
<text x="395" y="256" font-size="20.5" fill="#000" textLength="24" lengthAdjust="spacingAndGlyphs" >TV</text>
<text x="46" y="287" font-size="20.5" fill="#000" >Number</text>
<text x="387" y="287" font-size="20.5" fill="#000" text-anchor="end" >0</text>
<text x="513" y="287" font-size="20.5" fill="#000" text-anchor="end" >0</text>
<text x="46" y="318" font-size="20.5" fill="#000" textLength="190" lengthAdjust="spacingAndGlyphs" >Exposures (in 1000s)</text>
<text x="387" y="318" font-size="20.5" fill="#000" text-anchor="end" >250</text>
<text x="513" y="318" font-size="20.5" fill="#000" text-anchor="end" >1200</text>
<text x="46" y="349" font-size="20.5" fill="#000" >Cost</text>
<text x="380" y="349" font-size="20.5" fill="#000" text-anchor="end" >$2,000</text>
<text x="506" y="349" font-size="20.5" fill="#000" text-anchor="end" textLength="77" lengthAdjust="spacingAndGlyphs" >$12,000</text>
<text x="46" y="380" font-size="20.5" fill="#000" >Min</text>
<text x="387" y="380" font-size="20.5" fill="#000" text-anchor="end" >10</text>
<text x="513" y="380" font-size="20.5" fill="#000" text-anchor="end" >5</text>
<text x="387" y="411" font-size="20.5" fill="#000" text-anchor="end" >0</text>
<text x="513" y="411" font-size="20.5" fill="#000" text-anchor="end" >0</text>
<text x="613" y="411" font-size="20.5" fill="#000" text-anchor="end" >0</text>
<text x="46" y="442" font-size="20.5" fill="#000" textLength="111" lengthAdjust="spacingAndGlyphs" >Constraints:</text>
<text x="274" y="442" font-size="20.5" fill="#000" textLength="93" lengthAdjust="spacingAndGlyphs" >Exposures</text>
<text x="395" y="442" font-size="20.5" fill="#000" >Cost</text>
<text x="613" y="442" font-size="20.5" fill="#000" text-anchor="end" >0</text>
<text x="46" y="473" font-size="20.5" fill="#000" >Actual</text>
<text x="387" y="473" font-size="20.5" fill="#000" text-anchor="end" >0</text>
<text x="513" y="473" font-size="20.5" fill="#000" text-anchor="end" >0</text>
<text x="613" y="473" font-size="20.5" fill="#000" text-anchor="end" >0</text>
<text x="46" y="504" font-size="20.5" fill="#000" >Under</text>
<text x="387" y="504" font-size="20.5" fill="#000" text-anchor="end" >0</text>
<text x="513" y="504" font-size="20.5" fill="#000" text-anchor="end" >0</text>
<text x="46" y="535" font-size="20.5" fill="#000" >Over</text>
<text x="387" y="535" font-size="20.5" fill="#000" text-anchor="end" >0</text>
<text x="513" y="535" font-size="20.5" fill="#000" text-anchor="end" >0</text>
<text x="46" y="566" font-size="20.5" fill="#000" >Goal</text>
<text x="46" y="597" font-size="20.5" fill="#000" >Target</text>
<text x="387" y="597" font-size="20.5" fill="#000" text-anchor="end" textLength="65" lengthAdjust="spacingAndGlyphs" >17,250</text>
<text x="513" y="597" font-size="20.5" fill="#000" text-anchor="end" textLength="76" lengthAdjust="spacingAndGlyphs" >120,000</text>
<text x="46" y="659" font-size="20.5" fill="#000" textLength="196.6" lengthAdjust="spacingAndGlyphs" >Percentage Deviation</text>
<text x="46" y="690" font-size="20.5" fill="#000" >Under</text>
<text x="387" y="690" font-size="20.5" fill="#000" text-anchor="end" textLength="57.7" lengthAdjust="spacingAndGlyphs" >0.00%</text>
<text x="513" y="690" font-size="20.5" fill="#000" text-anchor="end" textLength="57.7" lengthAdjust="spacingAndGlyphs" >0.00%</text>
<text x="46" y="721" font-size="20.5" fill="#000" >Over</text>
<text x="387" y="721" font-size="20.5" fill="#000" text-anchor="end" textLength="57.7" lengthAdjust="spacingAndGlyphs" >0.00%</text>
<text x="513" y="721" font-size="20.5" fill="#000" text-anchor="end" textLength="57.7" lengthAdjust="spacingAndGlyphs" >0.00%</text>
<text x="46" y="783" font-size="20.5" fill="#000" textLength="98" lengthAdjust="spacingAndGlyphs" >OBJECTIVE</text>
<text x="387" y="783" font-size="20.5" fill="#000" text-anchor="end" textLength="57.7" lengthAdjust="spacingAndGlyphs" >0.00%</text>
<text x="380" y="845" font-size="20.5" fill="#000" text-anchor="end" textLength="52" lengthAdjust="spacingAndGlyphs" >$0.00</text>
<rect x="270" y="759" width="122" height="32" fill="none" stroke="#217346" stroke-width="2"/>
<rect x="388" y="787" width="6" height="6" fill="#217346" stroke="#fff" stroke-width="1" />
<rect x="1899" y="203" width="21" height="780" fill="#e6e6e6" />
<rect x="1902" y="219" width="15" height="749" fill="#f3f3f3" />
<rect x="1902.5" y="205.5" width="14" height="14" fill="#fff" stroke="#9a9a9a" stroke-width="1" rx="0"/>
<path d="M1905.5 215 h8 l-4 -4.5 z" fill="#222" />
<rect x="1902.5" y="304.5" width="14" height="663" fill="#fff" stroke="#9a9a9a" stroke-width="1" rx="0"/>
<rect x="1902.5" y="968.5" width="14" height="14" fill="#fff" stroke="#9a9a9a" stroke-width="1" rx="0"/>
<path d="M1905.5 973 h8 l-4 4.5 z" fill="#222" />
<rect x="0" y="982" width="1899" height="1" fill="#a6a6a6"/>
<rect x="0" y="983" width="1920" height="28" fill="#e6e6e6" />
<rect x="101" y="983" width="64" height="22" fill="#fff" />
<rect x="100" y="983" width="1" height="24" fill="#a6a6a6"/>
<rect x="165" y="983" width="1" height="24" fill="#a6a6a6"/>
<rect x="100" y="1005" width="66" height="2" fill="#217346" />
<rect x="0" y="982" width="101" height="1" fill="#a6a6a6"/>
<rect x="165" y="982" width="1734" height="1" fill="#a6a6a6"/>
<rect x="101" y="982" width="64" height="1" fill="#fff" />
<text x="112.3" y="1000" font-size="12.5" fill="#217346" font-weight="700" textLength="39.6" lengthAdjust="spacingAndGlyphs" >Sheet1</text>
<path d="M32 991 v9 l-5 -4.5 z" fill="#b9b9b9" />
<path d="M55 991 v9 l5 -4.5 z" fill="#b9b9b9" />
<circle cx="206" cy="996" r="7.5" fill="none" stroke="#b5b5b5" stroke-width="1.1" />
<path d="M206 991.5 v9 M201.5 996 h9" fill="none" stroke="#b5b5b5" stroke-width="1.2" />
<rect x="1152" y="991" width="2" height="2" fill="#9a9a9a" />
<rect x="1152" y="995.5" width="2" height="2" fill="#9a9a9a" />
<rect x="1152" y="1000" width="2" height="2" fill="#9a9a9a" />
<rect x="1184" y="989" width="700" height="15" fill="#f3f3f3" />
<rect x="1169.5" y="989.5" width="15" height="14" fill="#fff" stroke="#9a9a9a" stroke-width="1" rx="0"/>
<path d="M1179.5 992.5 v7.5 l-4.5 -3.75 z" fill="#222" />
<rect x="1184.5" y="989.5" width="656" height="14" fill="#fff" stroke="#9a9a9a" stroke-width="1" rx="0"/>
<rect x="1884.5" y="989.5" width="14" height="14" fill="#fff" stroke="#9a9a9a" stroke-width="1" rx="0"/>
<path d="M1889 992.5 v7.5 l4.5 -3.75 z" fill="#222" />
<rect x="0" y="1011" width="1920" height="21" fill="#f3f3f3" />
<rect x="0" y="1010" width="1920" height="1" fill="#c8c8c8"/>
<text x="12" y="1025" font-size="11.3" fill="#3a3a3a" textLength="27" lengthAdjust="spacingAndGlyphs" >Enter</text>
<path d="M61.5 1015.4 A6 6 0 0 0 57.2 1019.4" fill="none" stroke="#444" stroke-width="1.2" />
<path d="M57.2 1021.3 A6 6 0 0 0 62.5 1026.4" fill="none" stroke="#444" stroke-width="1.2" />
<path d="M63.4 1014.2 V1020" fill="none" stroke="#444" stroke-width="1.1" />
<path d="M61.3 1019.3 H65.5 L63.4 1021.6 Z" fill="#444" />
<path d="M63.5 1019.4 H67.5" fill="none" stroke="#444" stroke-width="0.8" />
<path d="M67.3 1017.2 V1021.7 L70.6 1019.4 Z" fill="#444" />
<path d="M64.8 1024.8 L67.5 1028.1 L72.7 1021.9" fill="none" stroke="#444" stroke-width="1.5" />
<text x="76" y="1025" font-size="11.3" fill="#3a3a3a" textLength="126.3" lengthAdjust="spacingAndGlyphs" >Accessibility: Good to go</text>
<rect x="1633.65" y="1014.65" width="11.7" height="11.7" fill="none" stroke="#7a7a7a" stroke-width="1.3" rx="0"/>
<rect x="1637" y="1014" width="1" height="13" fill="#7a7a7a"/>
<rect x="1641" y="1014" width="1" height="13" fill="#7a7a7a"/>
<rect x="1633" y="1018" width="13" height="1" fill="#7a7a7a"/>
<rect x="1633" y="1022" width="13" height="1" fill="#7a7a7a"/>
<rect x="1673.6" y="1014.6" width="12.8" height="11.8" fill="none" stroke="#7a7a7a" stroke-width="1.2" rx="0"/>
<rect x="1676.5" y="1017.5" width="7" height="6" fill="none" stroke="#7a7a7a" stroke-width="1" rx="0"/>
<rect x="1677" y="1019" width="6" height="1" fill="#7a7a7a"/>
<rect x="1677" y="1021" width="6" height="1" fill="#7a7a7a"/>
<rect x="1713.6" y="1014.6" width="12.8" height="11.8" fill="none" stroke="#7a7a7a" stroke-width="1.2" rx="0"/>
<path d="M1716 1014 v7 h8 v-7 M1720 1014 v7" fill="none" stroke="#7a7a7a" stroke-width="1" />
<rect x="1746" y="1020" width="8" height="1" fill="#b0b0b0"/>
<rect x="1759" y="1021" width="100" height="1" fill="#333"/>
<rect x="1809" y="1018" width="1" height="7" fill="#333"/>
<path d="M1868 1016 v9 M1863.5 1020.5 h9" fill="none" stroke="#b0b0b0" stroke-width="1.2" />
<text x="1885.6" y="1024.5" font-size="10.5" fill="#b4b4b4" textLength="26.3" lengthAdjust="spacingAndGlyphs" >157%</text>
<rect x="0" y="1032" width="1920" height="48" fill="#1c1c1c" />
<rect x="0" y="1032" width="1920" height="1" fill="#2a2a2a"/>
<circle cx="32" cy="1056" r="10" fill="#f5a623" />
<circle cx="26" cy="1048" r="5" fill="#b8d4f5" />
<circle cx="22" cy="1050" r="4" fill="#cfe3fa" />
<circle cx="30" cy="1049" r="4" fill="#cfe3fa" />
<circle cx="38" cy="1062" r="5" fill="#c7ddf8" />
<circle cx="33" cy="1063.5" r="3.8" fill="#dbe9fb" />
<circle cx="43" cy="1063.5" r="3.5" fill="#dbe9fb" />
<text x="50" y="1052" font-size="11.3" fill="#ffffff" textLength="24" lengthAdjust="spacingAndGlyphs" >65°F</text>
<text x="50" y="1067.5" font-size="11.3" fill="#e6e6e6" textLength="65.3" lengthAdjust="spacingAndGlyphs" >Partly sunny</text>
<rect x="639" y="1045" width="11" height="11" fill="url(#wl)" />
<rect x="651" y="1045" width="11" height="11" fill="url(#wl)" />
<rect x="639" y="1057" width="11" height="11" fill="url(#wl)" />
<rect x="651" y="1057" width="11" height="11" fill="url(#wl)" />
<defs><linearGradient id="wl" x1="0" y1="0" x2="1" y2="1"><stop offset="0" stop-color="#7fdcfd"/><stop offset="1" stop-color="#1f9cf0"/></linearGradient></defs>
<rect x="675.5" y="1040.5" width="219" height="31" rx="15.5" fill="#2f2f2f" stroke="#3d3d3d"/>
<circle cx="692.5" cy="1054.5" r="5.5" fill="none" stroke="#d8d8d8" stroke-width="1.6" />
<path d="M696.5 1058.5 l4.5 4.5" fill="none" stroke="#d8d8d8" stroke-width="1.8" />
<text x="712" y="1061" font-size="14" fill="#cfcfcf" textLength="41" lengthAdjust="spacingAndGlyphs" >Search</text>
<path d="M846 1064 q4 -5 20 -5 q20 0 22 5 q-10 3 -22 3 q-14 0 -20 -3 z" fill="#d6b98a" />
<path d="M850 1050 l14 -4 l4 11 l-14 4 z" fill="#e9efe6" stroke="#3b9a4b" stroke-width="1" />
<path d="M866 1047 l5 -5" fill="none" stroke="#f2a03c" stroke-width="2" />
<path d="M874 1050 a6 7 0 0 1 12 0 v12 h-12 z" fill="#2d6fd6" />
<circle cx="918.5" cy="1055.5" r="11" fill="#7a6fe0" />
<path d="M910 1063 l-2 5 l7 -3 z" fill="#7a6fe0" />
<rect x="912" y="1051" width="9" height="8" fill="#fff" rx="1.5" />
<path d="M921 1054 l4 -2.5 v7 l-4 -2.5 z" fill="#fff" />
<circle cx="962.8" cy="1056.4" r="12" fill="#db4437" />
<path d="M962.8 1056.4 L952.4 1062.4 A12 12 0 0 0 968.8 1066.8 Z" fill="#0f9d58" />
<path d="M962.8 1056.4 L968.8 1066.8 A12 12 0 0 0 974.8 1056.4 Z" fill="#f4b400" />
<path d="M962.8 1056.4 L974.8 1056.4 A12 12 0 0 0 974.8 1056.4 Z" fill="#f4b400" />
<path d="M962.8 1056.4 L974.8 1056.4 A12 12 0 0 1 968.8 1066.8 Z" fill="#f4b400" />
<circle cx="962.8" cy="1056.4" r="5.5" fill="#fff" />
<circle cx="962.8" cy="1056.4" r="4.3" fill="#4285f4" />
<circle cx="972.2" cy="1047" r="7.5" fill="#e8457c" />
<text x="972.2" y="1050.8" font-size="9.5" fill="#fff" text-anchor="middle" font-weight="700" >M</text>
<path d="M995 1045 h8 l2 3 h14 v19 h-24 z" fill="#f8c33a" />
<rect x="995" y="1049" width="24" height="18" fill="#fbd35a" />
<rect x="1000" y="1060" width="14" height="7" fill="#1d7fd6" rx="1.5" />
<rect x="1039" y="1044" width="24.5" height="24" fill="#fff" rx="4" />
<path d="M1043 1062 v-3 M1048 1062 v-6 M1053 1062 v-9 M1058 1062 v-12" fill="none" stroke="#49a317" stroke-width="2.5" />
<path d="M1043 1056 l6 -5 l4 3 l7 -7 M1056 1047 h4 v4" fill="none" stroke="#49a317" stroke-width="1.8" />
<rect x="1088" y="1045" width="19.5" height="22" fill="#21a366" rx="1.5" />
<rect x="1088" y="1052" width="19.5" height="7.5" fill="#107c41" />
<rect x="1088" y="1059.5" width="19.5" height="7.5" fill="#185c37" />
<rect x="1097" y="1045" width="10.5" height="7" fill="#33c481" />
<rect x="1083" y="1050" width="13" height="13" fill="#107c41" rx="1.5" />
<text x="1089.5" y="1060.5" font-size="10" fill="#fff" text-anchor="middle" font-weight="700" >X</text>
<rect x="1132" y="1045" width="19.5" height="22" fill="#41a5ee" rx="1.5" />
<rect x="1132" y="1052" width="19.5" height="7.5" fill="#2b7cd3" />
<rect x="1132" y="1059.5" width="19.5" height="7.5" fill="#185abd" />
<rect x="1127" y="1050" width="13" height="13" fill="#185abd" rx="1.5" />
<text x="1133.5" y="1060.5" font-size="9.5" fill="#fff" text-anchor="middle" font-weight="700" >W</text>
<circle cx="1184" cy="1056" r="11.5" fill="#ed6c47" />
<path d="M1184 1044.5 A11.5 11.5 0 0 1 1195.5 1056 H1184 Z" fill="#ff8f6b" />
<path d="M1184 1056 H1195.5 A11.5 11.5 0 0 1 1184 1067.5 Z" fill="#d35230" />
<rect x="1171" y="1050" width="13" height="13" fill="#c43e1c" rx="1.5" />
<text x="1177.5" y="1060.5" font-size="10" fill="#fff" text-anchor="middle" font-weight="700" >P</text>
<circle cx="1236" cy="1049" r="3.5" fill="#7b83eb" />
<rect x="1228" y="1053" width="14" height="13" fill="#7b83eb" rx="5" />
<circle cx="1227" cy="1048" r="4.5" fill="#5059c9" />
<rect x="1220" y="1053" width="16" height="14" fill="#5059c9" rx="4" />
<rect x="1215" y="1050" width="13" height="13" fill="#4b53bc" rx="1.5" />
<text x="1221.5" y="1060.5" font-size="10" fill="#fff" text-anchor="middle" font-weight="700" >T</text>
<circle cx="1237.7" cy="1048.6" r="4.8" fill="#c4314b" stroke="#1c1c1c" stroke-width="1" />
<circle cx="1270.8" cy="1055.5" r="12" fill="#0b5cff" />
<text x="1270.8" y="1059.5" font-size="11" fill="#fff" text-anchor="middle" font-weight="700" textLength="17" lengthAdjust="spacingAndGlyphs" >zm</text>
<rect x="959.8" y="1072" width="6" height="3" fill="#9e9e9e" rx="1.5" />
<rect x="1003.8" y="1072" width="6" height="3" fill="#9e9e9e" rx="1.5" />
<rect x="1091.8" y="1072" width="6" height="3" fill="#9e9e9e" rx="1.5" />
<rect x="1135.9" y="1072" width="6" height="3" fill="#9e9e9e" rx="1.5" />
<rect x="1179.8" y="1072" width="6" height="3" fill="#9e9e9e" rx="1.5" />
<rect x="1223.7" y="1072" width="6" height="3" fill="#9e9e9e" rx="1.5" />
<rect x="1267.8" y="1072" width="6" height="3" fill="#9e9e9e" rx="1.5" />
<path d="M1564 1059 l5.5 -5.5 l5.5 5.5" fill="none" stroke="#fff" stroke-width="1.4" />
<path d="M1594 1053 a7 7 0 0 1 12 -3 M1607 1058 a7 7 0 0 1 -12 3" fill="none" stroke="#fff" stroke-width="1.3" />
<path d="M1606 1047 v3.5 h-3.5 M1594 1064 v-3.5 h3.5" fill="none" stroke="#fff" stroke-width="1.2" />
<circle cx="1605.3" cy="1060" r="4" fill="#f7a21b" />
<rect x="1617" y="1036" width="32" height="40" fill="#d99ce4" rx="3" />
<rect x="1630.5" y="1045" width="5" height="10" fill="#111" rx="2.5" />
<path d="M1628 1052 a5 5 0 0 0 10 0 M1633 1057 v3" fill="none" stroke="#111" stroke-width="1.3" />
<text x="1659.5" y="1053" font-size="10.8" fill="#fff" textLength="23" lengthAdjust="spacingAndGlyphs" >ENG</text>
<text x="1665" y="1069" font-size="10.8" fill="#fff" textLength="11.6" lengthAdjust="spacingAndGlyphs" >IN</text>
<path d="M1700 1051 a13 13 0 0 1 18 0 M1703 1054.5 a8 8 0 0 1 12 0 M1706 1058 a4 4 0 0 1 6 0" fill="none" stroke="#fff" stroke-width="1.3" />
<circle cx="1709" cy="1061" r="1.3" fill="#fff" />
<path d="M1726 1052 h3 l5 -4 v14 l-5 -4 h-3 z" fill="none" stroke="#fff" stroke-width="1.1" />
<path d="M1737 1052 a4 4 0 0 1 0 6 M1739.5 1049.5 a8 8 0 0 1 0 11" fill="none" stroke="#fff" stroke-width="1.1" />
<path d="M1751 1050.5 h11 v10 h-11 z M1763 1053 v5" fill="none" stroke="#fff" stroke-width="1.2" />
<path d="M1755 1047 l-3 5 h3 l-2 4" fill="none" stroke="#fff" stroke-width="1.1" />
<text x="1836.6" y="1052.2" font-size="11.3" fill="#fff" text-anchor="end" textLength="42.8" lengthAdjust="spacingAndGlyphs" >2:13 PM</text>
<text x="1836.6" y="1068.2" font-size="11.3" fill="#fff" text-anchor="end" textLength="54.8" lengthAdjust="spacingAndGlyphs" >3/17/2024</text>
<path d="M1846 1061 v-5 a5.5 5.5 0 0 1 11 0 v5 l1.5 1.5 h-14 z" fill="#f0b6f5" />
<circle cx="1851.5" cy="1064.5" r="2" fill="#f0b6f5" />
<path d="M1880 1050 q4 -5 10 -4 l6 2 q3 2 2 6 l-3 10 q-2 4 -6 3 h-8 q-4 0 -3 -5 z" fill="url(#cp)" />
<defs><linearGradient id="cp" x1="0" y1="0" x2="1" y2="1"><stop offset="0" stop-color="#3ec1f5"/><stop offset="0.5" stop-color="#8bd35a"/><stop offset="1" stop-color="#e6529d"/></linearGradient></defs>
<rect x="1882" y="1059" width="18" height="8.5" fill="#f2c230" rx="2" />
<text x="1891" y="1066" font-size="7" fill="#222" text-anchor="middle" font-weight="700" textLength="14" lengthAdjust="spacingAndGlyphs" >PRE</text>
<defs><filter id="sh" x="-20%" y="-20%" width="140%" height="140%"><feGaussianBlur stdDeviation="18"/></filter></defs>
<rect x="954" y="310" width="566" height="598" rx="10" fill="#000" opacity="0.42" filter="url(#sh)"/>
<rect x="952.5" y="294.5" width="567.5" height="597.5" rx="8" fill="#f0f0f0" stroke="#9a9a9a" stroke-width="1"/>
<path d="M953 325 V302.5 a8 8 0 0 1 8 -8 H1511.5 a8 8 0 0 1 8 8 V325 Z" fill="#f3f3f3"/>
<text x="961" y="314" font-size="11.8" fill="#1a1a1a" textLength="94.3" lengthAdjust="spacingAndGlyphs" >Solver Parameters</text>
<path d="M1499.5 303.5 l11 11 M1510.5 303.5 l-11 11" fill="none" stroke="#1a1a1a" stroke-width="1.1" />
<rect x="966.5" y="337.5" width="538" height="503" fill="none" stroke="#dcdcdc"/>
<text x="983" y="365.6" font-size="11.5" fill="#1a1a1a" textLength="69.2" lengthAdjust="spacingAndGlyphs" >Set Objective:</text>
<rect x="996" y="367" width="5" height="1" fill="#1a1a1a"/>
<rect x="1204.5" y="352.5" width="287" height="21" fill="#fff" stroke="#a0a0a0" stroke-width="1" rx="0"/>
<rect x="1207.8" y="356.3" width="29.7" height="12.5" fill="#cccccc" />
<text x="1208" y="366.4" font-size="11.5" fill="#1a1a1a" textLength="29.5" lengthAdjust="spacingAndGlyphs" >$B$21</text>
<rect x="1238" y="356" width="1" height="13" fill="#000"/>
<rect x="1470.5" y="353.5" width="20" height="19" rx="3" fill="#fdfdfd" stroke="#dadada"/>
<path d="M1480.5 357 l-4 4 h2.6 v3.8 h2.8 v-3.8 h2.6 z" fill="#111" />
<rect x="1476" y="366" width="9" height="1" fill="#111"/>
<text x="983" y="400.8" font-size="11.5" fill="#1a1a1a" textLength="17" lengthAdjust="spacingAndGlyphs" >To:</text>
<circle cx="1040.3" cy="399.7" r="6" fill="#fff" stroke="#5a5a5a" stroke-width="1" />
<text x="1051.3" y="403.9" font-size="11.5" fill="#1a1a1a" textLength="20.6" lengthAdjust="spacingAndGlyphs" >Max</text>
<rect x="1051" y="405" width="10" height="1" fill="#1a1a1a"/>
<circle cx="1124.2" cy="399.7" r="6.5" fill="#0067c0" />
<circle cx="1124.2" cy="399.7" r="2.8" fill="#fff" />
<text x="1135.6" y="403.9" font-size="11.5" fill="#1a1a1a" textLength="19.1" lengthAdjust="spacingAndGlyphs" >Min</text>
<rect x="1149" y="405" width="6" height="1" fill="#1a1a1a"/>
<circle cx="1202.3" cy="399.7" r="6" fill="#fff" stroke="#5a5a5a" stroke-width="1" />
<text x="1213.3" y="403.9" font-size="11.5" fill="#1a1a1a" textLength="47.3" lengthAdjust="spacingAndGlyphs" >Value Of:</text>
<rect x="1213" y="405" width="7" height="1" fill="#1a1a1a"/>
<rect x="1309.5" y="387.5" width="182" height="21" fill="#fff" stroke="#a6a6a6" stroke-width="1" rx="0"/>
<rect x="1312" y="390" width="177" height="16" fill="#f0f0f0" />
<text x="1313.7" y="402" font-size="11" fill="#8a8a8a" textLength="6" lengthAdjust="spacingAndGlyphs" >0</text>
<text x="983" y="435.9" font-size="11.5" fill="#1a1a1a" textLength="139" lengthAdjust="spacingAndGlyphs" >By Changing Variable Cells:</text>
<rect x="983" y="437" width="7" height="1" fill="#1a1a1a"/>
<rect x="980.5" y="443.5" width="511" height="21" fill="#fff" stroke="#a0a0a0" stroke-width="1" rx="0"/>
<text x="984.4" y="457.8" font-size="11.5" fill="#1a1a1a" textLength="57.8" lengthAdjust="spacingAndGlyphs" >$B$9:$D$11</text>
<rect x="1470.5" y="444.5" width="20" height="19" rx="3" fill="#fdfdfd" stroke="#dadada"/>
<path d="M1480.5 448 l-4 4 h2.6 v3.8 h2.8 v-3.8 h2.6 z" fill="#111" />
<rect x="1476" y="457" width="9" height="1" fill="#111"/>
<text x="983.3" y="492" font-size="11.5" fill="#1a1a1a" textLength="136" lengthAdjust="spacingAndGlyphs" >Subject to the Constraints:</text>
<rect x="991" y="494" width="6" height="1" fill="#1a1a1a"/>
<rect x="980.5" y="499.5" width="371" height="172" fill="#fff" stroke="#7a7a7a" stroke-width="1" rx="0"/>
<rect x="1334" y="500" width="17" height="171" fill="#f0f0f0" />
<path d="M1338 513.5 h8 l-4 -5 z" fill="#a0a0a0" />
<path d="M1338 658.5 h8 l-4 5 z" fill="#a0a0a0" />
<text x="984.4" y="511.25" font-size="11.2" fill="#111" textLength="139" lengthAdjust="spacingAndGlyphs" >$B$12:$F$12 = $B$13:$F$13</text>
<text x="984.4" y="524.28" font-size="11.2" fill="#111" textLength="86.4" lengthAdjust="spacingAndGlyphs" >$B$9:$D$11 &gt;= 0</text>
<text x="984.4" y="537.31" font-size="11.2" fill="#111" textLength="103.6" lengthAdjust="spacingAndGlyphs" >$B$9:$D$9 = integer</text>
<text x="984.4" y="550.34" font-size="11.2" fill="#111" textLength="125.5" lengthAdjust="spacingAndGlyphs" >$B$5:$C$5 &lt;= $B$8:$C$8</text>
<text x="984.4" y="563.37" font-size="11.2" fill="#111" textLength="90.6" lengthAdjust="spacingAndGlyphs" >$E$10:$F$11 &gt;= 0</text>
<rect x="1360.1" y="500.7" width="137.10000000000014" height="24.500000000000057" rx="4" fill="#fdfdfd" stroke="#d0d0d0" stroke-width="1"/>
<rect x="1363.6" y="524" width="130.10000000000014" height="1" fill="#c2c2c2"/>
<text x="1418.3500000000001" y="516.7" font-size="11.5" fill="#1a1a1a" textLength="20.6" lengthAdjust="spacingAndGlyphs" >Add</text>
<rect x="1418" y="518" width="7" height="1" fill="#1a1a1a"/>
<rect x="1360.1" y="535.9" width="137.10000000000014" height="24.300000000000068" rx="4" fill="#fdfdfd" stroke="#d0d0d0" stroke-width="1"/>
<rect x="1363.6" y="559" width="130.10000000000014" height="1" fill="#c2c2c2"/>
<text x="1409.0500000000002" y="551.9" font-size="11.5" fill="#1a1a1a" textLength="39.2" lengthAdjust="spacingAndGlyphs" >Change</text>
<rect x="1408" y="553" width="7" height="1" fill="#1a1a1a"/>
<rect x="1360.1" y="570.9" width="137.10000000000014" height="24.5" rx="4" fill="#fdfdfd" stroke="#d0d0d0" stroke-width="1"/>
<rect x="1363.6" y="594" width="130.10000000000014" height="1" fill="#c2c2c2"/>
<text x="1412.3500000000001" y="586.9" font-size="11.5" fill="#1a1a1a" textLength="32.6" lengthAdjust="spacingAndGlyphs" >Delete</text>
<rect x="1412" y="588" width="7" height="1" fill="#1a1a1a"/>
<rect x="1360.1" y="614.0" width="137.10000000000014" height="24.200000000000045" rx="4" fill="#fdfdfd" stroke="#d0d0d0" stroke-width="1"/>
<rect x="1363.6" y="637" width="130.10000000000014" height="1" fill="#c2c2c2"/>
<text x="1406.8500000000001" y="629.9" font-size="11.5" fill="#1a1a1a" textLength="43.6" lengthAdjust="spacingAndGlyphs" >Reset All</text>
<rect x="1406" y="631" width="7" height="1" fill="#1a1a1a"/>
<rect x="1360.1" y="648.8" width="137.10000000000014" height="24.200000000000045" rx="4" fill="#fdfdfd" stroke="#d0d0d0" stroke-width="1"/>
<rect x="1363.6" y="672" width="130.10000000000014" height="1" fill="#c2c2c2"/>
<text x="1402.7" y="664.7" font-size="11.5" fill="#1a1a1a" textLength="51.9" lengthAdjust="spacingAndGlyphs" >Load/Save</text>
<rect x="1402" y="666" width="6" height="1" fill="#1a1a1a"/>
<rect x="985.5" y="679" width="12" height="12" rx="2" fill="#fff" stroke="#505050"/>
<text x="1002.4" y="689" font-size="11.5" fill="#1a1a1a" textLength="230" lengthAdjust="spacingAndGlyphs" >Make Unconstrained Variables Non-Negative</text>
<rect x="1021" y="691" width="6" height="1" fill="#1a1a1a"/>
<text x="983.5" y="716.4" font-size="11.5" fill="#1a1a1a" textLength="79" lengthAdjust="spacingAndGlyphs" >Select a Solving</text>
<rect x="991" y="718" width="6" height="1" fill="#1a1a1a"/>
<text x="983.5" y="728.8" font-size="11.5" fill="#1a1a1a" textLength="42.8" lengthAdjust="spacingAndGlyphs" >Method:</text>
<rect x="1085.5" y="702.5" width="287" height="21" fill="#fff" stroke="#a0a0a0" stroke-width="1" rx="0"/>
<rect x="1355.5" y="703.5" width="16" height="19" fill="#fdfdfd" />
<rect x="1355" y="703" width="1" height="20" fill="#cfcfcf"/>
<path d="M1359.5 711.5 l3.5 3.5 l3.5 -3.5" fill="none" stroke="#333" stroke-width="1" />
<text x="1089.5" y="717" font-size="11.5" fill="#111" textLength="76.2" lengthAdjust="spacingAndGlyphs" >GRG Nonlinear</text>
<rect x="1380.9" y="703.8" width="116.19999999999982" height="24.40000000000009" rx="4" fill="#fdfdfd" stroke="#d0d0d0" stroke-width="1"/>
<rect x="1384.4" y="727" width="109.19999999999982" height="1" fill="#c2c2c2"/>
<text x="1418.7" y="719.7" font-size="11.5" fill="#1a1a1a" textLength="40.6" lengthAdjust="spacingAndGlyphs" >Options</text>
<rect x="1425" y="721" width="7" height="1" fill="#1a1a1a"/>
<rect x="980.5" y="750.5" width="510" height="76" fill="none" stroke="#d9d9d9"/>
<text x="990.4" y="765.2" font-size="11.5" fill="#1a1a1a" textLength="81" lengthAdjust="spacingAndGlyphs" >Solving Method</text>
<text x="990" y="785.9" font-size="11.3" fill="#1a1a1a" textLength="479.2" lengthAdjust="spacingAndGlyphs" >Select the GRG Nonlinear engine for Solver Problems that are smooth nonlinear. Select the LP</text>
<text x="990" y="798.85" font-size="11.3" fill="#1a1a1a" textLength="448" lengthAdjust="spacingAndGlyphs" >Simplex engine for linear Solver Problems, and select the Evolutionary engine for Solver</text>
<text x="990" y="811.8" font-size="11.3" fill="#1a1a1a" textLength="160.5" lengthAdjust="spacingAndGlyphs" >problems that are non-smooth.</text>
<rect x="968.2" y="851.8" width="108.79999999999995" height="24.200000000000045" rx="4" fill="#fdfdfd" stroke="#d0d0d0" stroke-width="1"/>
<rect x="971.7" y="875" width="101.79999999999995" height="1" fill="#c2c2c2"/>
<text x="1010.85" y="868.2" font-size="11.5" fill="#1a1a1a" textLength="23.5" lengthAdjust="spacingAndGlyphs" >Help</text>
<rect x="1010" y="870" width="8" height="1" fill="#1a1a1a"/>
<rect x="1269.3" y="852.2" width="108.40000000000009" height="23.399999999999977" rx="4" fill="#fdfdfd" stroke="#0067c0" stroke-width="2"/>
<text x="1310.2" y="868.2" font-size="11.5" fill="#1a1a1a" textLength="26.6" lengthAdjust="spacingAndGlyphs" >Solve</text>
<rect x="1310" y="870" width="6" height="1" fill="#1a1a1a"/>
<rect x="1395.1" y="851.7" width="108.90000000000009" height="24.399999999999977" rx="4" fill="#fdfdfd" stroke="#d0d0d0" stroke-width="1"/>
<rect x="1398.6" y="875" width="101.90000000000009" height="1" fill="#c2c2c2"/>
<text x="1436.05" y="868.2" font-size="11.5" fill="#1a1a1a" textLength="27" lengthAdjust="spacingAndGlyphs" >Close</text>
<rect x="1445" y="870" width="6" height="1" fill="#1a1a1a"/>
</svg>
</body></html>
